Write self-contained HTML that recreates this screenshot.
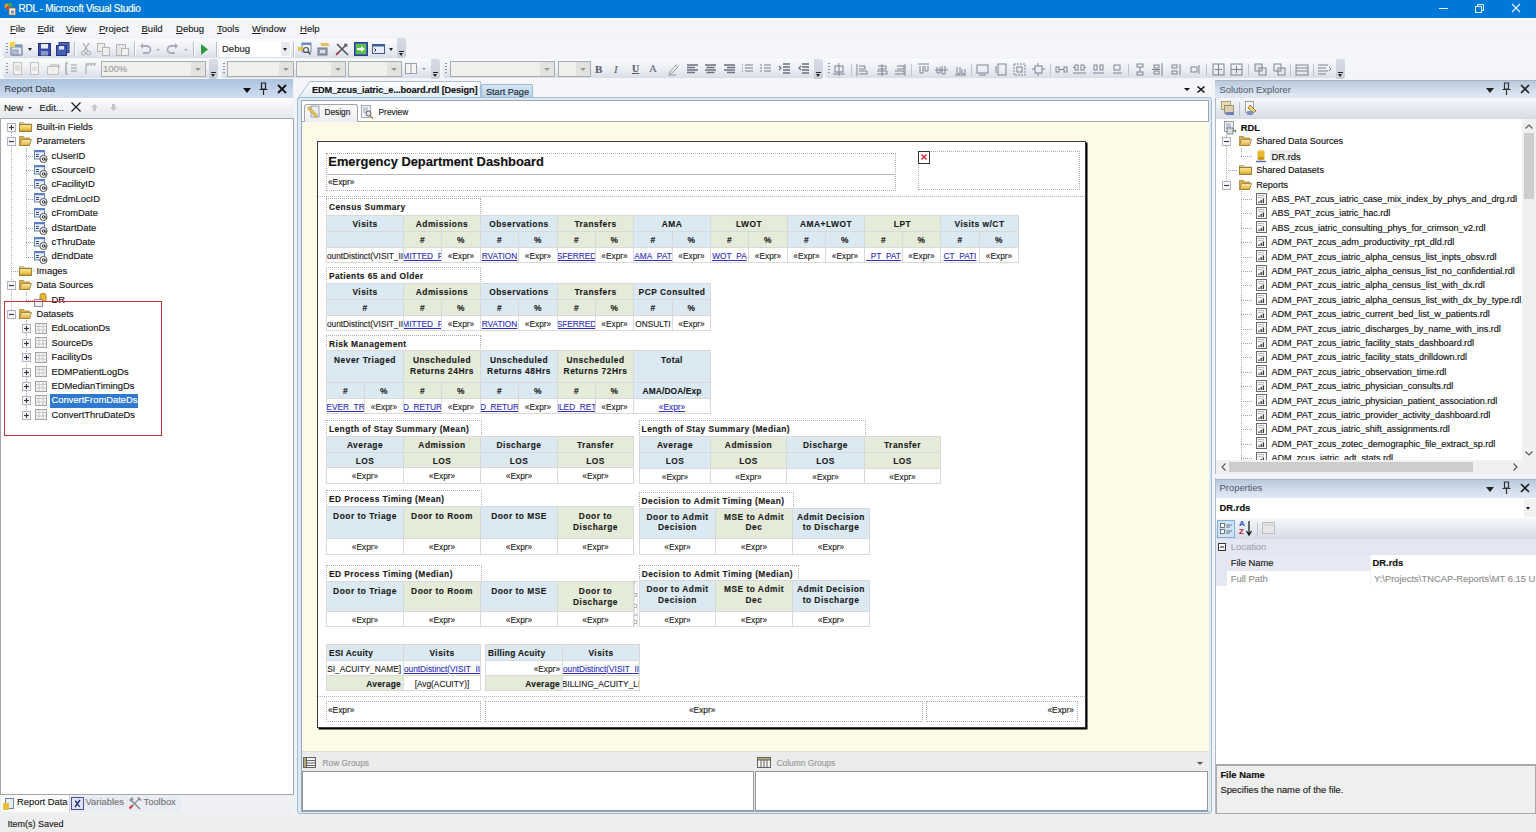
<!DOCTYPE html>
<html><head><meta charset="utf-8">
<style>
*{box-sizing:border-box;margin:0;padding:0}
html,body{width:1536px;height:832px;overflow:hidden;background:#eef0f6;font-family:"Liberation Sans",sans-serif;font-size:9.2px;color:#1e1e1e;position:relative}
.a{position:absolute}
.t{position:absolute;white-space:nowrap;line-height:1;-webkit-text-stroke:0.15px currentColor}
.a span{-webkit-text-stroke:0.12px currentColor}
svg{position:absolute;overflow:visible}
.strip{position:absolute;height:19px;border-radius:3px;background:linear-gradient(#fafbfd,#eceef4 55%,#d9dde8)}
.grip{position:absolute;width:2px;height:12px;background:repeating-linear-gradient(#8d93a3 0 1px,transparent 1px 3px)}
.sep{position:absolute;width:1px;height:15px;background:#b9bec9;box-shadow:1px 0 0 #fff}
.combo{position:absolute;height:16px;border:1px solid #a9adb4;background:#efefeb}
.combo .dd{position:absolute;right:0;top:0;width:14px;height:14px;background:#e2e2de}
.combo .dd:after{content:"";position:absolute;left:4px;top:6px;border:3px solid transparent;border-top:3px solid #999;border-bottom:0}
.ovf{position:absolute;width:9px;height:20px;background:linear-gradient(#d9dce6,#c9cdd9);border-radius:0 3px 3px 0}
.ovf:after{content:"";position:absolute;left:2px;top:13px;width:5px;height:1px;background:#222;box-shadow:0 0 0 0 #222}
.ovf:before{content:"";position:absolute;left:2px;top:15px;border:2.5px solid transparent;border-top:3px solid #222;border-bottom:0}
.ic{position:absolute;width:13px;height:13px}
.phdr{position:absolute;height:19px;background:linear-gradient(#abc2de,#c2d4ea 60%,#cddcef)}
.phdr2{position:absolute;height:19px;background:linear-gradient(#b9c8dc,#d3deec 55%,#e1e8f2);border-top:1px solid #a9b5c5}
.ptb{position:absolute;height:20px;background:linear-gradient(#fdfdfe,#f1f2f6 50%,#e6e9ef)}
.ptitle{position:absolute;top:4px;left:5px;font-size:9.4px;color:#2c3440;white-space:nowrap;line-height:1}
.tri{position:absolute;width:0;height:0;border:4.5px solid transparent;border-top:5px solid #111;border-bottom:0}
</style></head><body>

<!-- title bar -->
<div class="a" style="left:0;top:0;width:1536px;height:18px;background:#0078d7"></div>
<svg style="left:3px;top:2px" width="14" height="14" viewBox="0 0 14 14">
 <circle cx="4" cy="4" r="2.6" fill="#e0a030"/><circle cx="7" cy="3" r="2.2" fill="#4aa04a"/><circle cx="5" cy="6" r="2" fill="#d04040"/>
 <rect x="6" y="6" width="6.5" height="7" fill="#f4f0e0" stroke="#8a7a50" stroke-width=".8"/><rect x="8" y="8.5" width="3" height="3" fill="#7a8ab0"/>
</svg>
<div class="t" style="left:18.5px;top:3.6px;color:#fff;font-size:10px;letter-spacing:-0.28px">RDL - Microsoft Visual Studio</div>
<div class="a" style="left:1439px;top:8px;width:9px;height:1px;background:#e8f2ff"></div>
<svg style="left:1475px;top:4px" width="9" height="9" viewBox="0 0 9 9"><rect x="0.5" y="2.5" width="6" height="6" fill="none" stroke="#e8f2ff"/><path d="M2.5 2.5V0.5h6v6h-2" fill="none" stroke="#e8f2ff"/></svg>
<svg style="left:1512px;top:4px" width="8" height="8" viewBox="0 0 8 8"><path d="M0 0L8 8M8 0L0 8" stroke="#e8f2ff" stroke-width="1.1"/></svg>

<!-- menu -->
<div class="a" style="left:0;top:18px;width:1536px;height:21px;background:linear-gradient(#f6f8fb,#f2f4f9)"></div>
<div class="t" style="left:10px;top:24px;font-size:9.5px;color:#222"><u>F</u>ile</div>
<div class="t" style="left:37.5px;top:24px;font-size:9.5px;color:#222"><u>E</u>dit</div>
<div class="t" style="left:66px;top:24px;font-size:9.5px;color:#222"><u>V</u>iew</div>
<div class="t" style="left:99px;top:24px;font-size:9.5px;color:#222"><u>P</u>roject</div>
<div class="t" style="left:141.5px;top:24px;font-size:9.5px;color:#222"><u>B</u>uild</div>
<div class="t" style="left:176px;top:24px;font-size:9.5px;color:#222"><u>D</u>ebug</div>
<div class="t" style="left:217px;top:24px;font-size:9.5px;color:#222"><u>T</u>ools</div>
<div class="t" style="left:252px;top:24px;font-size:9.5px;color:#222"><u>W</u>indow</div>
<div class="t" style="left:300px;top:24px;font-size:9.5px;color:#222"><u>H</u>elp</div>

<!-- toolbar row 1 -->
<div class="a" style="left:0;top:39px;width:1536px;height:40px;background:#f3f5f9"></div>
<div class="strip" style="left:3px;top:39px;width:395px"></div>
<div class="ovf" style="left:397px;top:38px"></div>
<div class="grip" style="left:6px;top:43px"></div>
<!-- new project -->
<svg style="left:10px;top:42px" width="14" height="14" viewBox="0 0 14 14"><rect x="1" y="3" width="11" height="10" fill="#dfe7f2" stroke="#5b7396"/><rect x="1" y="3" width="11" height="2.5" fill="#7d97c0"/><rect x="0" y="0" width="5" height="5" fill="#f2d34a"/><rect x="3" y="8" width="5" height="5" fill="#b8c4d8" stroke="#6a7ea0" stroke-width=".7"/></svg>
<div class="tri" style="left:28px;top:48px;border-width:3px 2.5px 0;border-top-color:#222"></div>
<!-- save -->
<svg style="left:38px;top:43px" width="13" height="13" viewBox="0 0 13 13"><rect x="0.5" y="0.5" width="12" height="12" fill="#3a50a8" stroke="#24307a"/><rect x="3" y="1" width="7" height="4.5" fill="#e8ecf6"/><rect x="3" y="8" width="7" height="4.5" fill="#8898c8"/></svg>
<svg style="left:56px;top:42px" width="14" height="14" viewBox="0 0 14 14"><rect x="3" y="0.5" width="10" height="10" fill="#4f68b8" stroke="#2a3a86"/><rect x="0.5" y="3.5" width="10" height="10" fill="#4560b2" stroke="#263680"/><rect x="3" y="4" width="5" height="3.5" fill="#dfe5f4"/></svg>
<div class="sep" style="left:74px;top:42px"></div>
<svg style="left:81px;top:43px" width="10" height="13" viewBox="0 0 10 13"><path d="M2 0L7 8M8 0L3 8" stroke="#aaa" stroke-width="1.2"/><circle cx="2.5" cy="10" r="2" fill="none" stroke="#aaa"/><circle cx="7.5" cy="10" r="2" fill="none" stroke="#aaa"/></svg>
<svg style="left:97px;top:43px" width="13" height="13" viewBox="0 0 13 13"><rect x="0.5" y="0.5" width="7" height="8" fill="#eee" stroke="#b5b5b5"/><rect x="5.5" y="4.5" width="7" height="8" fill="#eee" stroke="#b5b5b5"/></svg>
<svg style="left:116px;top:43px" width="13" height="13" viewBox="0 0 13 13"><rect x="0.5" y="1.5" width="9" height="11" fill="#e5e5e5" stroke="#b5b5b5"/><rect x="5.5" y="5.5" width="7" height="7" fill="#f2f2f2" stroke="#b5b5b5"/></svg>
<div class="sep" style="left:134px;top:42px"></div>
<svg style="left:140px;top:43px" width="11" height="12" viewBox="0 0 11 12"><path d="M2 3h5a3 3 0 0 1 0 7H3" fill="none" stroke="#aab" stroke-width="1.8"/><path d="M0 3l3-3v6z" fill="#aab"/></svg>
<div class="tri" style="left:156px;top:49px;border-width:2.5px 2px 0;border-top-color:#aaa"></div>
<svg style="left:167px;top:43px" width="11" height="12" viewBox="0 0 11 12"><path d="M9 3H4a3 3 0 0 0 0 7h4" fill="none" stroke="#aab" stroke-width="1.8"/><path d="M11 3L8 0v6z" fill="#aab"/></svg>
<div class="tri" style="left:184px;top:49px;border-width:2.5px 2px 0;border-top-color:#aaa"></div>
<div class="sep" style="left:193px;top:42px"></div>
<svg style="left:201px;top:44px" width="8" height="11" viewBox="0 0 8 11"><path d="M0 0L7 5.5L0 11z" fill="#2f9a3a"/></svg>
<div class="sep" style="left:216px;top:42px"></div>
<div class="a" style="left:219px;top:41px;width:72px;height:16px;background:#fff"></div>
<div class="t" style="left:222px;top:44px;font-size:9.5px;color:#222">Debug</div>
<div class="a" style="left:281px;top:42px;width:9px;height:14px;background:#e9eaee"></div>
<div class="tri" style="left:283px;top:48px;border-width:3px 2.5px 0;border-top-color:#222"></div>
<div class="sep" style="left:293px;top:42px"></div>
<svg style="left:298px;top:42px" width="14" height="14" viewBox="0 0 14 14"><rect x="4" y="1" width="9" height="9" fill="#eef2f8" stroke="#6d8ab8"/><rect x="4" y="1" width="9" height="2" fill="#6d8ab8"/><path d="M0 5h5v4H0z" fill="#e5c45a"/><circle cx="8" cy="8" r="2.5" fill="none" stroke="#555" stroke-width="1.2"/><path d="M9.8 9.8L12.5 12.5" stroke="#555" stroke-width="1.5"/></svg>
<svg style="left:317px;top:42px" width="14" height="14" viewBox="0 0 14 14"><path d="M3 1h8l2 3H5z" fill="#e6c25a"/><rect x="1" y="6" width="9" height="7" fill="#9aa3b4" stroke="#6c7484"/><rect x="3" y="8" width="5" height="3" fill="#dde"/></svg>
<svg style="left:335px;top:42px" width="14" height="14" viewBox="0 0 14 14"><path d="M1 13L12 2M2 2l11 11" stroke="#555" stroke-width="1.6"/><path d="M1 13l3-1-2-2z" fill="#d03030"/><path d="M10 1l3 3-2 1-2-2z" fill="#666"/></svg>
<svg style="left:354px;top:42px" width="14" height="14" viewBox="0 0 14 14"><rect x="0.5" y="0.5" width="13" height="13" fill="#3f63b0" stroke="#2a4080"/><rect x="2" y="2" width="10" height="10" fill="#5cc24a"/><path d="M3 6h4V4l4 3-4 3V8H3z" fill="#fff"/></svg>
<svg style="left:372px;top:43px" width="13" height="12" viewBox="0 0 13 12"><rect x="0.5" y="1.5" width="12" height="9" fill="#e9eef6" stroke="#3f5f98"/><rect x="0.5" y="1.5" width="12" height="2" fill="#3f5f98"/><path d="M2.5 5.5l1.5 1.5-1.5 1.5" stroke="#222" fill="none"/></svg>
<div class="tri" style="left:389px;top:48px;border-width:3px 2.5px 0;border-top-color:#222"></div>

<!-- toolbar row 2 -->
<div class="strip" style="left:3px;top:59px;width:207px"></div>
<div class="ovf" style="left:209px;top:59px"></div>
<div class="grip" style="left:6px;top:63px"></div>
<svg style="left:13px;top:62px" width="9" height="13" viewBox="0 0 9 13"><rect x="0.5" y="0.5" width="8" height="12" fill="#f2f2f2" stroke="#c2c2c2"/><path d="M2 4h5M2 6h5M2 8h5" stroke="#ccc"/></svg>
<svg style="left:30px;top:62px" width="9" height="13" viewBox="0 0 9 13"><rect x="0.5" y="0.5" width="8" height="12" fill="#f2f2f2" stroke="#c2c2c2"/><path d="M2 6h5M2 8h5" stroke="#ccc"/></svg>
<svg style="left:47px;top:62px" width="13" height="13" viewBox="0 0 13 13"><rect x="0.5" y="4.5" width="11" height="8" fill="#f0f0f0" stroke="#c2c2c2"/><path d="M3 3h9v3" fill="none" stroke="#b0b0b0"/></svg>
<svg style="left:65px;top:62px" width="13" height="13" viewBox="0 0 13 13"><path d="M3 1H1v11h2M6 3h6M6 6h6M6 9h6" fill="none" stroke="#999" stroke-width="1.2"/></svg>
<svg style="left:85px;top:62px" width="12" height="13" viewBox="0 0 12 13"><path d="M1 12V2h10M3 1v3M6 1v3M9 1v3" fill="none" stroke="#aaa" stroke-width="1.1"/></svg>
<div class="combo" style="left:101px;top:61px;width:105px"><div class="dd"></div></div>
<div class="t" style="left:103px;top:64px;font-size:9.5px;color:#a0a0a0">100%</div>

<div class="strip" style="left:221px;top:59px;width:211px"></div>
<div class="ovf" style="left:431px;top:59px"></div>
<div class="grip" style="left:223px;top:63px"></div>
<div class="combo" style="left:226.5px;top:61px;width:67px"><div class="dd"></div></div>
<div class="combo" style="left:295.5px;top:61px;width:50px"><div class="dd"></div></div>
<div class="combo" style="left:347.5px;top:61px;width:54px"><div class="dd"></div></div>
<svg style="left:405px;top:63px" width="12" height="11" viewBox="0 0 12 11"><rect x="0.5" y="0.5" width="11" height="10" fill="#f5f5f5" stroke="#9aa0ac"/><path d="M6 0.5v10" stroke="#9aa0ac"/></svg>
<div class="tri" style="left:422px;top:68px;border-width:2.5px 2px 0;border-top-color:#999"></div>

<div class="strip" style="left:443px;top:59px;width:373px"></div>
<div class="ovf" style="left:814px;top:59px"></div>
<div class="grip" style="left:445px;top:63px"></div>
<div class="combo" style="left:449.5px;top:61px;width:105px"><div class="dd"></div></div>
<div class="combo" style="left:557.5px;top:61px;width:33px"><div class="dd"></div></div>
<div class="t" style="left:595px;top:64px;font-size:11px;font-weight:bold;font-family:'Liberation Serif',serif;color:#5a5f6c">B</div>
<div class="t" style="left:614px;top:64px;font-size:11px;font-style:italic;font-family:'Liberation Serif',serif;color:#5a5f6c">I</div>
<div class="t" style="left:632px;top:64px;font-size:10px;font-weight:bold;text-decoration:underline;font-family:'Liberation Serif',serif;color:#5a5f6c">U</div>
<div class="t" style="left:649px;top:63px;font-size:11px;font-family:'Liberation Serif',serif;color:#6a6f7c">A</div>
<svg style="left:667px;top:63px" width="13" height="13" viewBox="0 0 13 13"><path d="M2 10L9 2l2 2-7 7z" fill="none" stroke="#999"/><rect x="1" y="11" width="8" height="2" fill="#bbb"/></svg>
<svg style="left:687px;top:64px" width="11" height="10" viewBox="0 0 11 10"><path d="M0 1h11M0 3.5h8M0 6h11M0 8.5h8" stroke="#6a6f7c" stroke-width="1.3"/></svg>
<svg style="left:705px;top:64px" width="11" height="10" viewBox="0 0 11 10"><path d="M0 1h11M1.5 3.5h8M0 6h11M1.5 8.5h8" stroke="#6a6f7c" stroke-width="1.3"/></svg>
<svg style="left:724px;top:64px" width="11" height="10" viewBox="0 0 11 10"><path d="M0 1h11M3 3.5h8M0 6h11M3 8.5h8" stroke="#6a6f7c" stroke-width="1.3"/></svg>
<svg style="left:742px;top:64px" width="11" height="10" viewBox="0 0 11 10"><path d="M0 1h1M3 1h8M0 4h1M3 4h8M0 7h1M3 7h8" stroke="#7a7f8c" stroke-width="1.2"/></svg>
<svg style="left:760px;top:64px" width="11" height="10" viewBox="0 0 11 10"><path d="M0 1h2M4 1h7M0 4h2M4 4h7M0 7h2M4 7h7" stroke="#7a7f8c" stroke-width="1.2"/></svg>
<svg style="left:779px;top:63px" width="11" height="12" viewBox="0 0 11 12"><path d="M4 1h7M4 4h7M4 7h7M4 10h7M0 3l2 2-2 2" fill="none" stroke="#6a6f7c" stroke-width="1.3"/></svg>
<svg style="left:798px;top:63px" width="11" height="12" viewBox="0 0 11 12"><path d="M4 1h7M4 4h7M4 7h7M4 10h7M3 3L1 5l2 2" fill="none" stroke="#6a6f7c" stroke-width="1.3"/></svg>

<div class="strip" style="left:825px;top:59px;width:513px"></div>
<div class="ovf" style="left:1336px;top:59px"></div>
<div class="grip" style="left:828px;top:63px"></div>
<svg style="left:0;top:63px" width="1536" height="14" viewBox="0 0 1536 14" fill="none" stroke="#7f8491" stroke-width="1">
 <g transform="translate(833,0)"><rect x="2" y="3" width="8" height="6"/><path d="M6 0v13M0 11h12"/></g>
 <path d="M851.5 1v12" stroke="#c0c4cc"/>
 <g transform="translate(856,0)"><path d="M1 1v12M3 3h6v3H3M3 8h8v3H3"/></g>
 <g transform="translate(876,0)"><path d="M6 1v12M2 3h8v3H2M1 8h10v3H1"/></g>
 <g transform="translate(894,0)"><path d="M11 1v12M3 3h7v3H3M1 8h9v3H1"/></g>
 <path d="M911.5 1v12" stroke="#c0c4cc"/>
 <g transform="translate(917,0)"><path d="M1 1h11M3 3v7h3V3M8 3v5h3V3"/></g>
 <g transform="translate(935,0)"><path d="M0 7h13M2 4v6h3V4M7 3v8h3V3"/></g>
 <g transform="translate(954,0)"><path d="M1 12h11M3 4v7h3V4M8 6v5h3V6"/></g>
 <path d="M971.5 1v12" stroke="#c0c4cc"/>
 <g transform="translate(976,0)"><rect x="1" y="2" width="11" height="8"/><path d="M3 12h7"/></g>
 <g transform="translate(995,0)"><rect x="3" y="1" width="8" height="11"/><path d="M1 3v7"/></g>
 <g transform="translate(1013,0)"><rect x="1" y="1" width="11" height="11" stroke-dasharray="2 1"/><rect x="4" y="4" width="5" height="5"/></g>
 <g transform="translate(1032,0)"><rect x="3" y="3" width="7" height="7"/><path d="M6 0v3M6 10v3M0 6h3M10 6h3"/></g>
 <path d="M1050.5 1v12" stroke="#c0c4cc"/>
 <g transform="translate(1055,0)"><rect x="1" y="4" width="3" height="5"/><rect x="9" y="4" width="3" height="5"/><path d="M4 6.5h5"/></g>
 <g transform="translate(1073,0)"><rect x="2" y="2" width="3" height="5"/><rect x="8" y="2" width="3" height="5"/><path d="M0 10h13M0 4.5h2M11 4.5h2"/></g>
 <g transform="translate(1092,0)"><rect x="2" y="2" width="3" height="5"/><rect x="8" y="2" width="3" height="5"/><path d="M1 10h11"/></g>
 <g transform="translate(1111,0)"><rect x="3" y="2" width="6" height="5"/><path d="M2 10h9"/></g>
 <path d="M1128.5 1v12" stroke="#c0c4cc"/>
 <g transform="translate(1134,0)"><rect x="3" y="1" width="6" height="3"/><rect x="3" y="9" width="6" height="3"/><path d="M6 4v5"/></g>
 <g transform="translate(1152,0)"><rect x="2" y="2" width="5" height="3"/><rect x="2" y="8" width="5" height="3"/><path d="M10 0v13M0 6.5h8"/></g>
 <g transform="translate(1170,0)"><rect x="2" y="2" width="5" height="3"/><rect x="2" y="8" width="5" height="3"/><path d="M10 1v11"/></g>
 <g transform="translate(1189,0)"><rect x="2" y="4" width="6" height="5"/><path d="M10 2v9"/></g>
 <path d="M1206.5 1v12" stroke="#c0c4cc"/>
 <g transform="translate(1212,0)"><rect x="1" y="1" width="11" height="11"/><path d="M6.5 1v11M3 6.5h7"/></g>
 <g transform="translate(1230,0)"><rect x="1" y="1" width="11" height="11"/><path d="M1 6.5h11M6.5 3v7"/></g>
 <path d="M1248.5 1v12" stroke="#c0c4cc"/>
 <g transform="translate(1254,0)"><rect x="1" y="1" width="7" height="7" fill="#e4e6ea"/><rect x="5" y="5" width="7" height="7"/></g>
 <g transform="translate(1273,0)"><rect x="5" y="5" width="7" height="7" fill="#e4e6ea"/><rect x="1" y="1" width="7" height="7"/></g>
 <path d="M1290.5 1v12" stroke="#c0c4cc"/>
 <g transform="translate(1295,0)"><rect x="1" y="2" width="12" height="10"/><path d="M1 5h12M1 8h12"/></g>
 <path d="M1313.5 1v12" stroke="#c0c4cc"/>
 <g transform="translate(1318,0)"><path d="M0 2h10M0 5h8M0 8h10M0 11h8M11 4l2 2-2 2"/></g>
</svg>

<div class="a" style="left:0;top:79px;width:294px;height:736px;background:#eef0f6"></div>
<div class="phdr" style="left:0;top:79px;width:293px"></div>
<div class="ptitle" style="left:4.5px;top:84px;font-size:9.4px">Report Data</div>
<div class="tri" style="left:243px;top:88px;border-width:5px 4.5px 0"></div>
<svg style="left:259px;top:82px" width="9" height="13" viewBox="0 0 9 13"><path d="M2.5 1h4v6h-4z" fill="none" stroke="#222" stroke-width="1.2"/><path d="M0.5 7.5h8M4.5 8v5" stroke="#222" stroke-width="1.2"/></svg>
<svg style="left:277px;top:83.5px" width="10" height="10" viewBox="0 0 10 10"><path d="M1 1L9 9M9 1L1 9" stroke="#111" stroke-width="1.8"/></svg>
<div class="ptb" style="left:0;top:98px;width:293px"></div>
<div class="t" style="left:4px;top:103px;font-size:9.5px;color:#222">New</div>
<div class="tri" style="left:28px;top:107px;border-width:2.5px 2px 0;border-top-color:#333"></div>
<div class="t" style="left:39.5px;top:103px;font-size:9.5px;color:#222">Edit...</div>
<svg style="left:71px;top:102px" width="10" height="10" viewBox="0 0 10 10"><path d="M0.5 0.5L9.5 9.5M9.5 0.5L0.5 9.5" stroke="#222" stroke-width="1.3"/></svg>
<svg style="left:91px;top:104px" width="7" height="7" viewBox="0 0 7 7"><path d="M3.5 0L7 3.5H5V7H2V3.5H0z" fill="#c4c4c4"/></svg>
<svg style="left:110px;top:104px" width="7" height="7" viewBox="0 0 7 7"><path d="M3.5 7L7 3.5H5V0H2V3.5H0z" fill="#c4c4c4"/></svg>
<div class="a" style="left:0;top:118px;width:294px;height:677px;background:#fff;border:1px solid #a3a6ad"></div>
<div class="a" style="left:0;top:795px;width:294px;height:19px;background:#eef0f6"></div>
<div class="a" style="left:1px;top:795px;width:69px;height:17px;background:#fcfcfd;border-right:1px solid #d0d3da"></div>
<div class="a" style="left:71px;top:796px;width:110px;height:16px;background:#e9ecf3"></div>
<svg style="left:3px;top:798px" width="11" height="12" viewBox="0 0 11 12"><rect x="2.5" y="0.5" width="8" height="10" fill="#e8eef8" stroke="#6a84b0"/><rect x="0" y="5" width="6" height="7" fill="#e8c040"/></svg>
<div class="t" style="left:17px;top:797px;font-size:9.4px;color:#222">Report Data</div>
<svg style="left:71px;top:797px" width="13" height="13" viewBox="0 0 13 13"><rect x="0.5" y="0.5" width="12" height="12" fill="#dfe3f0" stroke="#4a4f9a"/><path d="M4 10L9 3M4 4c2 0 2.5 5.5 5 5.5" stroke="#1f2a80" stroke-width="1.4" fill="none"/></svg>
<div class="t" style="left:85.5px;top:797px;font-size:9.4px;color:#777">Variables</div>
<svg style="left:128px;top:797px" width="14" height="13" viewBox="0 0 14 13"><path d="M2 2l10 10" stroke="#8a8a8a" stroke-width="1.6"/><path d="M1 3l3-3 2 2-3 3z" fill="#9a9a9a"/><path d="M12 1L4 9" stroke="#9a9a9a" stroke-width="1.4"/><path d="M4.5 8.5L1.5 11.5" stroke="#d03a3a" stroke-width="2.2"/><path d="M10 0.5l3 3" stroke="#888" stroke-width="1.5"/></svg>
<div class="t" style="left:143.5px;top:797px;font-size:9.4px;color:#777">Toolbox</div>
<div class="a" style="left:10.5px;top:132px;width:1px;height:182px;border-left:1px dotted #b0b0b0"></div>
<div class="a" style="left:25.5px;top:148px;width:1px;height:108px;border-left:1px dotted #b0b0b0"></div>
<div class="a" style="left:25.5px;top:292px;width:1px;height:8px;border-left:1px dotted #b0b0b0"></div>
<div class="a" style="left:25.5px;top:320px;width:1px;height:92px;border-left:1px dotted #b0b0b0"></div>
<svg style="left:7px;top:123px" width="9" height="9" viewBox="0 0 9 9"><rect x="0.5" y="0.5" width="8" height="8" fill="#f6f6f8" stroke="#b0b4c0"/><path d="M2 4.5h5" stroke="#3a3a3a" stroke-width="1.1"/><path d="M4.5 2v5" stroke="#3a3a3a" stroke-width="1.1"/></svg>
<svg style="left:19px;top:121.9px" width="13" height="10" viewBox="0 0 13 10"><defs><linearGradient id="fc" x1="0" y1="0" x2="0" y2="1"><stop offset="0" stop-color="#f8e7a0"/><stop offset=".6" stop-color="#efc850"/><stop offset="1" stop-color="#c89830"/></linearGradient></defs><path d="M0.5 0.5h4l1 1.5h7v2H0.5z" fill="#e0cfa0" stroke="#b0a070" stroke-width=".8"/><rect x="0.5" y="2.5" width="12" height="7" fill="url(#fc)" stroke="#8a6a20" stroke-width=".8"/></svg>
<div class="t" style="left:36.5px;top:121.7px;font-size:9.4px;color:#141414">Built-in Fields</div>
<svg style="left:7px;top:137px" width="9" height="9" viewBox="0 0 9 9"><rect x="0.5" y="0.5" width="8" height="8" fill="#f6f6f8" stroke="#b0b4c0"/><path d="M2 4.5h5" stroke="#3a3a3a" stroke-width="1.1"/></svg>
<svg style="left:19px;top:136.3px" width="13" height="10" viewBox="0 0 13 10"><defs><linearGradient id="fo" x1="0" y1="0" x2="0" y2="1"><stop offset="0" stop-color="#fbeaa8"/><stop offset="1" stop-color="#dcae40"/></linearGradient></defs><path d="M0.5 0.5h4l1 1.5h5v7.5H0.5z" fill="#d8b050" stroke="#a88a40" stroke-width=".8"/><path d="M2.5 3.5h10l-2 6H0.5z" fill="url(#fo)" stroke="#9a7a30" stroke-width=".8"/></svg>
<div class="t" style="left:36.5px;top:136.1px;font-size:9.4px;color:#141414">Parameters</div>
<div class="a" style="left:26px;top:155.7px;width:7px;height:1px;border-top:1px dotted #a0a0a0"></div>
<svg style="left:34px;top:149.2px" width="14" height="14" viewBox="0 0 14 14"><rect x="0.5" y="1.5" width="10" height="8.5" fill="#e8eef8" stroke="#5a78b0" stroke-width=".9"/><rect x="0.5" y="1" width="10" height="2.2" fill="#5b80c8"/><path d="M2 5.5h3M2 7.5h3" stroke="#3a4a70"/><circle cx="9.5" cy="10" r="3.6" fill="#f4f4f4" stroke="#444" stroke-width=".9"/><circle cx="9.6" cy="10" r="1.3" fill="none" stroke="#222" stroke-width=".9"/><path d="M10.9 9v1.6c0 .8 1.3.8 1.3-.3" fill="none" stroke="#222" stroke-width=".8"/></svg>
<div class="t" style="left:51.5px;top:150.5px;font-size:9.4px;color:#141414">cUserID</div>
<div class="a" style="left:26px;top:170.1px;width:7px;height:1px;border-top:1px dotted #a0a0a0"></div>
<svg style="left:34px;top:163.6px" width="14" height="14" viewBox="0 0 14 14"><rect x="0.5" y="1.5" width="10" height="8.5" fill="#e8eef8" stroke="#5a78b0" stroke-width=".9"/><rect x="0.5" y="1" width="10" height="2.2" fill="#5b80c8"/><path d="M2 5.5h3M2 7.5h3" stroke="#3a4a70"/><circle cx="9.5" cy="10" r="3.6" fill="#f4f4f4" stroke="#444" stroke-width=".9"/><circle cx="9.6" cy="10" r="1.3" fill="none" stroke="#222" stroke-width=".9"/><path d="M10.9 9v1.6c0 .8 1.3.8 1.3-.3" fill="none" stroke="#222" stroke-width=".8"/></svg>
<div class="t" style="left:51.5px;top:164.9px;font-size:9.4px;color:#141414">cSourceID</div>
<div class="a" style="left:26px;top:184.5px;width:7px;height:1px;border-top:1px dotted #a0a0a0"></div>
<svg style="left:34px;top:178.0px" width="14" height="14" viewBox="0 0 14 14"><rect x="0.5" y="1.5" width="10" height="8.5" fill="#e8eef8" stroke="#5a78b0" stroke-width=".9"/><rect x="0.5" y="1" width="10" height="2.2" fill="#5b80c8"/><path d="M2 5.5h3M2 7.5h3" stroke="#3a4a70"/><circle cx="9.5" cy="10" r="3.6" fill="#f4f4f4" stroke="#444" stroke-width=".9"/><circle cx="9.6" cy="10" r="1.3" fill="none" stroke="#222" stroke-width=".9"/><path d="M10.9 9v1.6c0 .8 1.3.8 1.3-.3" fill="none" stroke="#222" stroke-width=".8"/></svg>
<div class="t" style="left:51.5px;top:179.3px;font-size:9.4px;color:#141414">cFacilityID</div>
<div class="a" style="left:26px;top:198.9px;width:7px;height:1px;border-top:1px dotted #a0a0a0"></div>
<svg style="left:34px;top:192.4px" width="14" height="14" viewBox="0 0 14 14"><rect x="0.5" y="1.5" width="10" height="8.5" fill="#e8eef8" stroke="#5a78b0" stroke-width=".9"/><rect x="0.5" y="1" width="10" height="2.2" fill="#5b80c8"/><path d="M2 5.5h3M2 7.5h3" stroke="#3a4a70"/><circle cx="9.5" cy="10" r="3.6" fill="#f4f4f4" stroke="#444" stroke-width=".9"/><circle cx="9.6" cy="10" r="1.3" fill="none" stroke="#222" stroke-width=".9"/><path d="M10.9 9v1.6c0 .8 1.3.8 1.3-.3" fill="none" stroke="#222" stroke-width=".8"/></svg>
<div class="t" style="left:51.5px;top:193.7px;font-size:9.4px;color:#141414">cEdmLocID</div>
<div class="a" style="left:26px;top:213.3px;width:7px;height:1px;border-top:1px dotted #a0a0a0"></div>
<svg style="left:34px;top:206.8px" width="14" height="14" viewBox="0 0 14 14"><rect x="0.5" y="1.5" width="10" height="8.5" fill="#e8eef8" stroke="#5a78b0" stroke-width=".9"/><rect x="0.5" y="1" width="10" height="2.2" fill="#5b80c8"/><path d="M2 5.5h3M2 7.5h3" stroke="#3a4a70"/><circle cx="9.5" cy="10" r="3.6" fill="#f4f4f4" stroke="#444" stroke-width=".9"/><circle cx="9.6" cy="10" r="1.3" fill="none" stroke="#222" stroke-width=".9"/><path d="M10.9 9v1.6c0 .8 1.3.8 1.3-.3" fill="none" stroke="#222" stroke-width=".8"/></svg>
<div class="t" style="left:51.5px;top:208.1px;font-size:9.4px;color:#141414">cFromDate</div>
<div class="a" style="left:26px;top:227.7px;width:7px;height:1px;border-top:1px dotted #a0a0a0"></div>
<svg style="left:34px;top:221.2px" width="14" height="14" viewBox="0 0 14 14"><rect x="0.5" y="1.5" width="10" height="8.5" fill="#e8eef8" stroke="#5a78b0" stroke-width=".9"/><rect x="0.5" y="1" width="10" height="2.2" fill="#5b80c8"/><path d="M2 5.5h3M2 7.5h3" stroke="#3a4a70"/><circle cx="9.5" cy="10" r="3.6" fill="#f4f4f4" stroke="#444" stroke-width=".9"/><circle cx="9.6" cy="10" r="1.3" fill="none" stroke="#222" stroke-width=".9"/><path d="M10.9 9v1.6c0 .8 1.3.8 1.3-.3" fill="none" stroke="#222" stroke-width=".8"/></svg>
<div class="t" style="left:51.5px;top:222.5px;font-size:9.4px;color:#141414">dStartDate</div>
<div class="a" style="left:26px;top:242.1px;width:7px;height:1px;border-top:1px dotted #a0a0a0"></div>
<svg style="left:34px;top:235.6px" width="14" height="14" viewBox="0 0 14 14"><rect x="0.5" y="1.5" width="10" height="8.5" fill="#e8eef8" stroke="#5a78b0" stroke-width=".9"/><rect x="0.5" y="1" width="10" height="2.2" fill="#5b80c8"/><path d="M2 5.5h3M2 7.5h3" stroke="#3a4a70"/><circle cx="9.5" cy="10" r="3.6" fill="#f4f4f4" stroke="#444" stroke-width=".9"/><circle cx="9.6" cy="10" r="1.3" fill="none" stroke="#222" stroke-width=".9"/><path d="M10.9 9v1.6c0 .8 1.3.8 1.3-.3" fill="none" stroke="#222" stroke-width=".8"/></svg>
<div class="t" style="left:51.5px;top:236.9px;font-size:9.4px;color:#141414">cThruDate</div>
<div class="a" style="left:26px;top:256.5px;width:7px;height:1px;border-top:1px dotted #a0a0a0"></div>
<svg style="left:34px;top:250.0px" width="14" height="14" viewBox="0 0 14 14"><rect x="0.5" y="1.5" width="10" height="8.5" fill="#e8eef8" stroke="#5a78b0" stroke-width=".9"/><rect x="0.5" y="1" width="10" height="2.2" fill="#5b80c8"/><path d="M2 5.5h3M2 7.5h3" stroke="#3a4a70"/><circle cx="9.5" cy="10" r="3.6" fill="#f4f4f4" stroke="#444" stroke-width=".9"/><circle cx="9.6" cy="10" r="1.3" fill="none" stroke="#222" stroke-width=".9"/><path d="M10.9 9v1.6c0 .8 1.3.8 1.3-.3" fill="none" stroke="#222" stroke-width=".8"/></svg>
<div class="t" style="left:51.5px;top:251.3px;font-size:9.4px;color:#141414">dEndDate</div>
<div class="a" style="left:11px;top:270.9px;width:7px;height:1px;border-top:1px dotted #a0a0a0"></div>
<svg style="left:19px;top:265.9px" width="13" height="10" viewBox="0 0 13 10"><defs><linearGradient id="fc" x1="0" y1="0" x2="0" y2="1"><stop offset="0" stop-color="#f8e7a0"/><stop offset=".6" stop-color="#efc850"/><stop offset="1" stop-color="#c89830"/></linearGradient></defs><path d="M0.5 0.5h4l1 1.5h7v2H0.5z" fill="#e0cfa0" stroke="#b0a070" stroke-width=".8"/><rect x="0.5" y="2.5" width="12" height="7" fill="url(#fc)" stroke="#8a6a20" stroke-width=".8"/></svg>
<div class="t" style="left:36.5px;top:265.7px;font-size:9.4px;color:#141414">Images</div>
<svg style="left:7px;top:281px" width="9" height="9" viewBox="0 0 9 9"><rect x="0.5" y="0.5" width="8" height="8" fill="#f6f6f8" stroke="#b0b4c0"/><path d="M2 4.5h5" stroke="#3a3a3a" stroke-width="1.1"/></svg>
<svg style="left:19px;top:280.3px" width="13" height="10" viewBox="0 0 13 10"><defs><linearGradient id="fo" x1="0" y1="0" x2="0" y2="1"><stop offset="0" stop-color="#fbeaa8"/><stop offset="1" stop-color="#dcae40"/></linearGradient></defs><path d="M0.5 0.5h4l1 1.5h5v7.5H0.5z" fill="#d8b050" stroke="#a88a40" stroke-width=".8"/><path d="M2.5 3.5h10l-2 6H0.5z" fill="url(#fo)" stroke="#9a7a30" stroke-width=".8"/></svg>
<div class="t" style="left:36.5px;top:280.1px;font-size:9.4px;color:#141414">Data Sources</div>
<div class="a" style="left:26px;top:299.7px;width:7px;height:1px;border-top:1px dotted #a0a0a0"></div>
<svg style="left:34px;top:293.2px" width="14" height="14" viewBox="0 0 14 14"><rect x="6" y="0.5" width="6" height="8" rx="2" fill="#e8b830" stroke="#a07a10" stroke-width=".8"/><rect x="0.5" y="6.5" width="8" height="7" fill="#eef" stroke="#777" stroke-width=".8"/></svg>
<div class="t" style="left:51.5px;top:294.5px;font-size:9.4px;color:#141414">DR</div>
<svg style="left:7px;top:310px" width="9" height="9" viewBox="0 0 9 9"><rect x="0.5" y="0.5" width="8" height="8" fill="#f6f6f8" stroke="#b0b4c0"/><path d="M2 4.5h5" stroke="#3a3a3a" stroke-width="1.1"/></svg>
<svg style="left:19px;top:309.1px" width="13" height="10" viewBox="0 0 13 10"><defs><linearGradient id="fo" x1="0" y1="0" x2="0" y2="1"><stop offset="0" stop-color="#fbeaa8"/><stop offset="1" stop-color="#dcae40"/></linearGradient></defs><path d="M0.5 0.5h4l1 1.5h5v7.5H0.5z" fill="#d8b050" stroke="#a88a40" stroke-width=".8"/><path d="M2.5 3.5h10l-2 6H0.5z" fill="url(#fo)" stroke="#9a7a30" stroke-width=".8"/></svg>
<div class="t" style="left:36.5px;top:308.9px;font-size:9.4px;color:#141414">Datasets</div>
<svg style="left:22px;top:324px" width="9" height="9" viewBox="0 0 9 9"><rect x="0.5" y="0.5" width="8" height="8" fill="#f6f6f8" stroke="#b0b4c0"/><path d="M2 4.5h5" stroke="#3a3a3a" stroke-width="1.1"/><path d="M4.5 2v5" stroke="#3a3a3a" stroke-width="1.1"/></svg>
<svg style="left:35px;top:323.0px" width="12" height="11" viewBox="0 0 12 11"><rect x="0.5" y="0.5" width="11" height="10" fill="#f4f4f4" stroke="#a0a0a0"/><path d="M0.5 3.5h11M0.5 7h11M4 0.5v10M8 0.5v10" stroke="#c8c8c8"/></svg>
<div class="t" style="left:51.5px;top:323.3px;font-size:9.4px;color:#141414">EdLocationDs</div>
<svg style="left:22px;top:339px" width="9" height="9" viewBox="0 0 9 9"><rect x="0.5" y="0.5" width="8" height="8" fill="#f6f6f8" stroke="#b0b4c0"/><path d="M2 4.5h5" stroke="#3a3a3a" stroke-width="1.1"/><path d="M4.5 2v5" stroke="#3a3a3a" stroke-width="1.1"/></svg>
<svg style="left:35px;top:337.4px" width="12" height="11" viewBox="0 0 12 11"><rect x="0.5" y="0.5" width="11" height="10" fill="#f4f4f4" stroke="#a0a0a0"/><path d="M0.5 3.5h11M0.5 7h11M4 0.5v10M8 0.5v10" stroke="#c8c8c8"/></svg>
<div class="t" style="left:51.5px;top:337.7px;font-size:9.4px;color:#141414">SourceDs</div>
<svg style="left:22px;top:353px" width="9" height="9" viewBox="0 0 9 9"><rect x="0.5" y="0.5" width="8" height="8" fill="#f6f6f8" stroke="#b0b4c0"/><path d="M2 4.5h5" stroke="#3a3a3a" stroke-width="1.1"/><path d="M4.5 2v5" stroke="#3a3a3a" stroke-width="1.1"/></svg>
<svg style="left:35px;top:351.8px" width="12" height="11" viewBox="0 0 12 11"><rect x="0.5" y="0.5" width="11" height="10" fill="#f4f4f4" stroke="#a0a0a0"/><path d="M0.5 3.5h11M0.5 7h11M4 0.5v10M8 0.5v10" stroke="#c8c8c8"/></svg>
<div class="t" style="left:51.5px;top:352.1px;font-size:9.4px;color:#141414">FacilityDs</div>
<svg style="left:22px;top:368px" width="9" height="9" viewBox="0 0 9 9"><rect x="0.5" y="0.5" width="8" height="8" fill="#f6f6f8" stroke="#b0b4c0"/><path d="M2 4.5h5" stroke="#3a3a3a" stroke-width="1.1"/><path d="M4.5 2v5" stroke="#3a3a3a" stroke-width="1.1"/></svg>
<svg style="left:35px;top:366.2px" width="12" height="11" viewBox="0 0 12 11"><rect x="0.5" y="0.5" width="11" height="10" fill="#f4f4f4" stroke="#a0a0a0"/><path d="M0.5 3.5h11M0.5 7h11M4 0.5v10M8 0.5v10" stroke="#c8c8c8"/></svg>
<div class="t" style="left:51.5px;top:366.5px;font-size:9.4px;color:#141414">EDMPatientLogDs</div>
<svg style="left:22px;top:382px" width="9" height="9" viewBox="0 0 9 9"><rect x="0.5" y="0.5" width="8" height="8" fill="#f6f6f8" stroke="#b0b4c0"/><path d="M2 4.5h5" stroke="#3a3a3a" stroke-width="1.1"/><path d="M4.5 2v5" stroke="#3a3a3a" stroke-width="1.1"/></svg>
<svg style="left:35px;top:380.6px" width="12" height="11" viewBox="0 0 12 11"><rect x="0.5" y="0.5" width="11" height="10" fill="#f4f4f4" stroke="#a0a0a0"/><path d="M0.5 3.5h11M0.5 7h11M4 0.5v10M8 0.5v10" stroke="#c8c8c8"/></svg>
<div class="t" style="left:51.5px;top:380.9px;font-size:9.4px;color:#141414">EDMedianTimingDs</div>
<svg style="left:22px;top:396px" width="9" height="9" viewBox="0 0 9 9"><rect x="0.5" y="0.5" width="8" height="8" fill="#f6f6f8" stroke="#b0b4c0"/><path d="M2 4.5h5" stroke="#3a3a3a" stroke-width="1.1"/><path d="M4.5 2v5" stroke="#3a3a3a" stroke-width="1.1"/></svg>
<svg style="left:35px;top:395.0px" width="12" height="11" viewBox="0 0 12 11"><rect x="0.5" y="0.5" width="11" height="10" fill="#f4f4f4" stroke="#a0a0a0"/><path d="M0.5 3.5h11M0.5 7h11M4 0.5v10M8 0.5v10" stroke="#c8c8c8"/></svg>
<div class="t" style="left:51.5px;top:395.3px;font-size:9.4px;color:#141414">ConvertFromDateDs</div>
<svg style="left:22px;top:411px" width="9" height="9" viewBox="0 0 9 9"><rect x="0.5" y="0.5" width="8" height="8" fill="#f6f6f8" stroke="#b0b4c0"/><path d="M2 4.5h5" stroke="#3a3a3a" stroke-width="1.1"/><path d="M4.5 2v5" stroke="#3a3a3a" stroke-width="1.1"/></svg>
<svg style="left:35px;top:409.4px" width="12" height="11" viewBox="0 0 12 11"><rect x="0.5" y="0.5" width="11" height="10" fill="#f4f4f4" stroke="#a0a0a0"/><path d="M0.5 3.5h11M0.5 7h11M4 0.5v10M8 0.5v10" stroke="#c8c8c8"/></svg>
<div class="t" style="left:51.5px;top:409.7px;font-size:9.4px;color:#141414">ConvertThruDateDs</div>
<div class="a" style="left:49.5px;top:393.8px;width:88.5px;height:14.4px;background:#2f7ad0"></div>
<div class="t" style="left:51.5px;top:395.3px;font-size:9.4px;color:#fff">ConvertFromDateDs</div>
<div class="a" style="left:4px;top:300.5px;width:157.5px;height:135px;border:1.5px solid #c8303a"></div>
<!-- document area -->
<div class="a" style="left:294px;top:79px;width:921px;height:736px;background:#f4f6fa"></div>
<!-- active tab -->
<svg style="left:296px;top:80px" width="186" height="20" viewBox="0 0 186 20"><defs><linearGradient id="gt" x1="0" y1="0" x2="0" y2="1"><stop offset="0" stop-color="#ffffff"/><stop offset="1" stop-color="#dce9f5"/></linearGradient></defs><path d="M1 19.5L14 1.5h170.5v18z" fill="url(#gt)" stroke="#a9c0d4"/></svg>
<div class="t" style="left:312px;top:86px;font-size:9.2px;font-weight:bold;color:#111;letter-spacing:-0.12px">EDM_zcus_iatric_e...board.rdl [Design]</div>
<div class="a" style="left:481px;top:83.5px;width:52px;height:15px;background:linear-gradient(#d6e5f3,#b5d0e8);border:1px solid #9fbad3;border-bottom:0;border-radius:2px 2px 0 0"></div>
<div class="t" style="left:486px;top:87.5px;font-size:9.1px;color:#1e2a36">Start Page</div>
<div class="tri" style="left:1183.5px;top:88px;border-width:3.5px 3.2px 0"></div>
<svg style="left:1197px;top:85.5px" width="8" height="7" viewBox="0 0 8 7"><path d="M0.5 0.5L7.5 6.5M7.5 0.5L0.5 6.5" stroke="#111" stroke-width="1.6"/></svg>
<!-- frame -->
<div class="a" style="left:294px;top:122px;width:3px;height:690px;background:#eef3f8"></div>
<div class="a" style="left:297px;top:97px;width:915px;height:717px;background:#dbeaf5;border:1px solid #a5bccd;border-radius:3px"></div>
<div class="a" style="left:300.5px;top:100px;width:908.5px;height:712px;background:#fff;border:1px solid #99a7b3"></div>
<!-- design / preview tabs -->
<div class="a" style="left:301.5px;top:121px;width:907px;height:1px;background:#a7a7a7"></div>
<div class="a" style="left:304px;top:104px;width:54px;height:18px;background:linear-gradient(#fbfbfc,#eceef1);border:1px solid #a4a4a4;border-bottom:0;border-radius:3px 3px 0 0"></div>
<svg style="left:306.5px;top:105px" width="13" height="14" viewBox="0 0 13 14"><rect x="4" y="1" width="8" height="11" fill="#e7ecf4" stroke="#8090a8" stroke-width=".8"/><path d="M1 2L10 12" stroke="#c9a030" stroke-width="3"/><path d="M1 2L10 12" stroke="#e8c860" stroke-width="1.2"/></svg>
<div class="t" style="left:324.5px;top:107.8px;font-size:8.3px;color:#222">Design</div>
<svg style="left:361px;top:105px" width="13" height="14" viewBox="0 0 13 14"><rect x="0.5" y="0.5" width="9" height="12" fill="#f2f4f8" stroke="#8a94a8" stroke-width=".8"/><path d="M2 3h5M2 5h5M2 7h3" stroke="#9aa"/><circle cx="7.5" cy="8.5" r="2.5" fill="#dde6f2" stroke="#556"/><path d="M9 10.5l3 3" stroke="#b08830" stroke-width="1.5"/></svg>
<div class="t" style="left:378.5px;top:107.8px;font-size:8.4px;color:#222">Preview</div>
<!-- design surface -->
<div class="a" style="left:301.5px;top:122px;width:907px;height:629px;background:#fdfae8"></div>
<!-- row/column groups -->
<div class="a" style="left:301.5px;top:751px;width:907px;height:60px;background:#ececec;border-top:1px solid #e0ddd0"></div>
<svg style="left:303px;top:757px" width="13" height="11" viewBox="0 0 13 11"><rect x="0.5" y="0.5" width="12" height="10" fill="#f4f4f8" stroke="#666"/><rect x="1" y="1" width="2.5" height="9" fill="#b8a870"/><path d="M3.5 0.5v10M3.5 3.5h9M3.5 6h9M3.5 8.5h9" stroke="#555" stroke-width=".9"/></svg>
<div class="t" style="left:322.5px;top:759px;font-size:8.4px;color:#9a9a9a">Row Groups</div>
<svg style="left:757px;top:757px" width="14" height="11" viewBox="0 0 14 11"><rect x="0.5" y="0.5" width="13" height="10" fill="#f4f4f8" stroke="#666"/><rect x="1" y="1" width="12" height="2" fill="#b8a870"/><path d="M0.5 3h13M4 3v7.5M7 3v7.5M10 3v7.5" stroke="#555" stroke-width=".9"/></svg>
<div class="t" style="left:776.5px;top:759px;font-size:8.4px;color:#9a9a9a">Column Groups</div>
<div class="tri" style="left:1197px;top:762px;border-width:3.5px 3px 0;border-top-color:#555"></div>
<div class="a" style="left:301.5px;top:771px;width:452px;height:40px;background:#fff;border:1px solid #8f969c"></div>
<div class="a" style="left:755px;top:771px;width:453px;height:40px;background:#fff;border:1px solid #8f969c"></div>

<div class="a" style="left:317px;top:141px;width:769px;height:587px;background:#fff;border:1.5px solid #3a3a3a;box-shadow:1.5px 1.5px 0 #000"></div>
<div class="a" style="left:326px;top:153px;width:570px;height:37.5px;border:1px dotted #ababab"></div>
<div class="a" style="left:326px;top:173.5px;width:570px;height:1px;background:#b9b9b9"></div>
<div class="t" style="left:328.3px;top:156.3px;font-size:12.9px;font-weight:bold;color:#111">Emergency Department Dashboard</div>
<div class="t" style="left:328px;top:178px;font-size:8.3px;color:#222">«Expr»</div>
<div class="a" style="left:918px;top:150.5px;width:161.5px;height:39.5px;border:1px dotted #ababab"></div>
<div class="a" style="left:918px;top:150.5px;width:11.5px;height:13px;background:#fff;border:1px solid #333;border-right-width:1.5px;border-bottom-width:1.5px"></div>
<svg style="left:921px;top:154px" width="6" height="6" viewBox="0 0 6 6"><path d="M0.5 0.5L5.5 5.5M5.5 0.5L0.5 5.5" stroke="#d02030" stroke-width="1.3"/></svg>
<div class="a" style="left:318px;top:195.5px;width:767px;height:1px;border-top:1px dotted #b5b5b5"></div>
<div class="a" style="left:318px;top:695.8px;width:767px;height:1px;border-top:1px dotted #b5b5b5"></div>
<div class="a" style="left:326px;top:701px;width:155px;height:20.5px;border:1px dotted #ababab"></div>
<div class="t" style="left:328px;top:705.5px;font-size:8.3px;color:#222">«Expr»</div>
<div class="a" style="left:485px;top:701px;width:437.5px;height:20.5px;border:1px dotted #ababab"></div>
<div class="t" style="left:689px;top:705.5px;font-size:8.3px;color:#222">«Expr»</div>
<div class="a" style="left:926px;top:701px;width:152px;height:20.5px;border:1px dotted #ababab"></div>
<div class="t" style="left:1047.5px;top:705.5px;font-size:8.3px;color:#222">«Expr»</div>
<div class="a" style="left:326.0px;top:198.0px;width:155.0px;height:17.5px;background:#fff;border:1px dotted #ababab;overflow:hidden;padding:3px 0 0 2px"><span style="white-space:nowrap;line-height:10px;font-size:8.4px;font-weight:bold;letter-spacing:0.42px;color:#1a1a1a">Census Summary</span></div>
<div class="a" style="left:326.0px;top:215.0px;width:78.0px;height:17.0px;background:#dae9f2;border:1px solid #d9d9d9;display:flex;justify-content:center;align-items:center;overflow:hidden;padding:0 0px;padding-top:1.5px;"><span style="white-space:nowrap;line-height:10.5px;text-align:center;font-size:8.4px;font-weight:bold;letter-spacing:0.5px;color:#1a1a1a">Visits</span></div>
<div class="a" style="left:326.0px;top:231.0px;width:78.0px;height:17.0px;background:#dae9f2;border:1px solid #d9d9d9;display:flex;justify-content:center;align-items:center;overflow:hidden;padding:0 0px;padding-top:1.5px;"><span style="white-space:nowrap;line-height:10.5px;text-align:center;font-size:8.4px;font-weight:bold;letter-spacing:0.5px;color:#1a1a1a"></span></div>
<div class="a" style="left:326.0px;top:247.0px;width:78.0px;height:16.0px;background:#fff;border:1px solid #d9d9d9;display:flex;justify-content:center;align-items:center;overflow:hidden;padding:0 0px;padding-top:1.5px;"><span style="white-space:nowrap;line-height:10.5px;text-align:center;font-size:8.3px;color:#222">ountDistinct(VISIT_II</span></div>
<div class="a" style="left:403.0px;top:215.0px;width:78.0px;height:17.0px;background:#e5ebd9;border:1px solid #d9d9d9;display:flex;justify-content:center;align-items:center;overflow:hidden;padding:0 0px;padding-top:1.5px;"><span style="white-space:nowrap;line-height:10.5px;text-align:center;font-size:8.4px;font-weight:bold;letter-spacing:0.5px;color:#1a1a1a">Admissions</span></div>
<div class="a" style="left:403.0px;top:231.0px;width:39.0px;height:17.0px;background:#e5ebd9;border:1px solid #d9d9d9;display:flex;justify-content:center;align-items:center;overflow:hidden;padding:0 0px;padding-top:1.5px;"><span style="white-space:nowrap;line-height:10.5px;text-align:center;font-size:8.4px;font-weight:bold;letter-spacing:0.5px;color:#1a1a1a">#</span></div>
<div class="a" style="left:441.0px;top:231.0px;width:40.0px;height:17.0px;background:#e5ebd9;border:1px solid #d9d9d9;display:flex;justify-content:center;align-items:center;overflow:hidden;padding:0 0px;padding-top:1.5px;"><span style="white-space:nowrap;line-height:10.5px;text-align:center;font-size:8.4px;font-weight:bold;letter-spacing:0.5px;color:#1a1a1a">%</span></div>
<div class="a" style="left:403.0px;top:247.0px;width:39.0px;height:16.0px;background:#fff;border:1px solid #d9d9d9;display:flex;justify-content:center;align-items:center;overflow:hidden;padding:0 0px;padding-top:1.5px;"><span style="white-space:nowrap;line-height:10.5px;text-align:center;font-size:8.3px;color:#3030b8;text-decoration:underline">MITTED_F</span></div>
<div class="a" style="left:441.0px;top:247.0px;width:40.0px;height:16.0px;background:#fff;border:1px solid #d9d9d9;display:flex;justify-content:center;align-items:center;overflow:hidden;padding:0 0px;padding-top:1.5px;"><span style="white-space:nowrap;line-height:10.5px;text-align:center;font-size:8.3px;color:#222">«Expr»</span></div>
<div class="a" style="left:480.0px;top:215.0px;width:78.0px;height:17.0px;background:#dae9f2;border:1px solid #d9d9d9;display:flex;justify-content:center;align-items:center;overflow:hidden;padding:0 0px;padding-top:1.5px;"><span style="white-space:nowrap;line-height:10.5px;text-align:center;font-size:8.4px;font-weight:bold;letter-spacing:0.5px;color:#1a1a1a">Observations</span></div>
<div class="a" style="left:480.0px;top:231.0px;width:39.0px;height:17.0px;background:#dae9f2;border:1px solid #d9d9d9;display:flex;justify-content:center;align-items:center;overflow:hidden;padding:0 0px;padding-top:1.5px;"><span style="white-space:nowrap;line-height:10.5px;text-align:center;font-size:8.4px;font-weight:bold;letter-spacing:0.5px;color:#1a1a1a">#</span></div>
<div class="a" style="left:518.0px;top:231.0px;width:40.0px;height:17.0px;background:#dae9f2;border:1px solid #d9d9d9;display:flex;justify-content:center;align-items:center;overflow:hidden;padding:0 0px;padding-top:1.5px;"><span style="white-space:nowrap;line-height:10.5px;text-align:center;font-size:8.4px;font-weight:bold;letter-spacing:0.5px;color:#1a1a1a">%</span></div>
<div class="a" style="left:480.0px;top:247.0px;width:39.0px;height:16.0px;background:#fff;border:1px solid #d9d9d9;display:flex;justify-content:center;align-items:center;overflow:hidden;padding:0 0px;padding-top:1.5px;"><span style="white-space:nowrap;line-height:10.5px;text-align:center;font-size:8.3px;color:#3030b8;text-decoration:underline">RVATION</span></div>
<div class="a" style="left:518.0px;top:247.0px;width:40.0px;height:16.0px;background:#fff;border:1px solid #d9d9d9;display:flex;justify-content:center;align-items:center;overflow:hidden;padding:0 0px;padding-top:1.5px;"><span style="white-space:nowrap;line-height:10.5px;text-align:center;font-size:8.3px;color:#222">«Expr»</span></div>
<div class="a" style="left:557.0px;top:215.0px;width:77.0px;height:17.0px;background:#e5ebd9;border:1px solid #d9d9d9;display:flex;justify-content:center;align-items:center;overflow:hidden;padding:0 0px;padding-top:1.5px;"><span style="white-space:nowrap;line-height:10.5px;text-align:center;font-size:8.4px;font-weight:bold;letter-spacing:0.5px;color:#1a1a1a">Transfers</span></div>
<div class="a" style="left:557.0px;top:231.0px;width:39.0px;height:17.0px;background:#e5ebd9;border:1px solid #d9d9d9;display:flex;justify-content:center;align-items:center;overflow:hidden;padding:0 0px;padding-top:1.5px;"><span style="white-space:nowrap;line-height:10.5px;text-align:center;font-size:8.4px;font-weight:bold;letter-spacing:0.5px;color:#1a1a1a">#</span></div>
<div class="a" style="left:595.0px;top:231.0px;width:39.0px;height:17.0px;background:#e5ebd9;border:1px solid #d9d9d9;display:flex;justify-content:center;align-items:center;overflow:hidden;padding:0 0px;padding-top:1.5px;"><span style="white-space:nowrap;line-height:10.5px;text-align:center;font-size:8.4px;font-weight:bold;letter-spacing:0.5px;color:#1a1a1a">%</span></div>
<div class="a" style="left:557.0px;top:247.0px;width:39.0px;height:16.0px;background:#fff;border:1px solid #d9d9d9;display:flex;justify-content:center;align-items:center;overflow:hidden;padding:0 0px;padding-top:1.5px;"><span style="white-space:nowrap;line-height:10.5px;text-align:center;font-size:8.3px;color:#3030b8;text-decoration:underline">SFERRED</span></div>
<div class="a" style="left:595.0px;top:247.0px;width:39.0px;height:16.0px;background:#fff;border:1px solid #d9d9d9;display:flex;justify-content:center;align-items:center;overflow:hidden;padding:0 0px;padding-top:1.5px;"><span style="white-space:nowrap;line-height:10.5px;text-align:center;font-size:8.3px;color:#222">«Expr»</span></div>
<div class="a" style="left:633.0px;top:215.0px;width:78.0px;height:17.0px;background:#dae9f2;border:1px solid #d9d9d9;display:flex;justify-content:center;align-items:center;overflow:hidden;padding:0 0px;padding-top:1.5px;"><span style="white-space:nowrap;line-height:10.5px;text-align:center;font-size:8.4px;font-weight:bold;letter-spacing:0.5px;color:#1a1a1a">AMA</span></div>
<div class="a" style="left:633.0px;top:231.0px;width:40.0px;height:17.0px;background:#dae9f2;border:1px solid #d9d9d9;display:flex;justify-content:center;align-items:center;overflow:hidden;padding:0 0px;padding-top:1.5px;"><span style="white-space:nowrap;line-height:10.5px;text-align:center;font-size:8.4px;font-weight:bold;letter-spacing:0.5px;color:#1a1a1a">#</span></div>
<div class="a" style="left:672.0px;top:231.0px;width:39.0px;height:17.0px;background:#dae9f2;border:1px solid #d9d9d9;display:flex;justify-content:center;align-items:center;overflow:hidden;padding:0 0px;padding-top:1.5px;"><span style="white-space:nowrap;line-height:10.5px;text-align:center;font-size:8.4px;font-weight:bold;letter-spacing:0.5px;color:#1a1a1a">%</span></div>
<div class="a" style="left:633.0px;top:247.0px;width:40.0px;height:16.0px;background:#fff;border:1px solid #d9d9d9;display:flex;justify-content:center;align-items:center;overflow:hidden;padding:0 0px;padding-top:1.5px;"><span style="white-space:nowrap;line-height:10.5px;text-align:center;font-size:8.3px;color:#3030b8;text-decoration:underline">AMA_PAT</span></div>
<div class="a" style="left:672.0px;top:247.0px;width:39.0px;height:16.0px;background:#fff;border:1px solid #d9d9d9;display:flex;justify-content:center;align-items:center;overflow:hidden;padding:0 0px;padding-top:1.5px;"><span style="white-space:nowrap;line-height:10.5px;text-align:center;font-size:8.3px;color:#222">«Expr»</span></div>
<div class="a" style="left:710.0px;top:215.0px;width:78.0px;height:17.0px;background:#e5ebd9;border:1px solid #d9d9d9;display:flex;justify-content:center;align-items:center;overflow:hidden;padding:0 0px;padding-top:1.5px;"><span style="white-space:nowrap;line-height:10.5px;text-align:center;font-size:8.4px;font-weight:bold;letter-spacing:0.5px;color:#1a1a1a">LWOT</span></div>
<div class="a" style="left:710.0px;top:231.0px;width:39.0px;height:17.0px;background:#e5ebd9;border:1px solid #d9d9d9;display:flex;justify-content:center;align-items:center;overflow:hidden;padding:0 0px;padding-top:1.5px;"><span style="white-space:nowrap;line-height:10.5px;text-align:center;font-size:8.4px;font-weight:bold;letter-spacing:0.5px;color:#1a1a1a">#</span></div>
<div class="a" style="left:748.0px;top:231.0px;width:40.0px;height:17.0px;background:#e5ebd9;border:1px solid #d9d9d9;display:flex;justify-content:center;align-items:center;overflow:hidden;padding:0 0px;padding-top:1.5px;"><span style="white-space:nowrap;line-height:10.5px;text-align:center;font-size:8.4px;font-weight:bold;letter-spacing:0.5px;color:#1a1a1a">%</span></div>
<div class="a" style="left:710.0px;top:247.0px;width:39.0px;height:16.0px;background:#fff;border:1px solid #d9d9d9;display:flex;justify-content:center;align-items:center;overflow:hidden;padding:0 0px;padding-top:1.5px;"><span style="white-space:nowrap;line-height:10.5px;text-align:center;font-size:8.3px;color:#3030b8;text-decoration:underline">WOT_PA</span></div>
<div class="a" style="left:748.0px;top:247.0px;width:40.0px;height:16.0px;background:#fff;border:1px solid #d9d9d9;display:flex;justify-content:center;align-items:center;overflow:hidden;padding:0 0px;padding-top:1.5px;"><span style="white-space:nowrap;line-height:10.5px;text-align:center;font-size:8.3px;color:#222">«Expr»</span></div>
<div class="a" style="left:787.0px;top:215.0px;width:78.0px;height:17.0px;background:#dae9f2;border:1px solid #d9d9d9;display:flex;justify-content:center;align-items:center;overflow:hidden;padding:0 0px;padding-top:1.5px;"><span style="white-space:nowrap;line-height:10.5px;text-align:center;font-size:8.4px;font-weight:bold;letter-spacing:0.5px;color:#1a1a1a">AMA+LWOT</span></div>
<div class="a" style="left:787.0px;top:231.0px;width:39.0px;height:17.0px;background:#dae9f2;border:1px solid #d9d9d9;display:flex;justify-content:center;align-items:center;overflow:hidden;padding:0 0px;padding-top:1.5px;"><span style="white-space:nowrap;line-height:10.5px;text-align:center;font-size:8.4px;font-weight:bold;letter-spacing:0.5px;color:#1a1a1a">#</span></div>
<div class="a" style="left:825.0px;top:231.0px;width:40.0px;height:17.0px;background:#dae9f2;border:1px solid #d9d9d9;display:flex;justify-content:center;align-items:center;overflow:hidden;padding:0 0px;padding-top:1.5px;"><span style="white-space:nowrap;line-height:10.5px;text-align:center;font-size:8.4px;font-weight:bold;letter-spacing:0.5px;color:#1a1a1a">%</span></div>
<div class="a" style="left:787.0px;top:247.0px;width:39.0px;height:16.0px;background:#fff;border:1px solid #d9d9d9;display:flex;justify-content:center;align-items:center;overflow:hidden;padding:0 0px;padding-top:1.5px;"><span style="white-space:nowrap;line-height:10.5px;text-align:center;font-size:8.3px;color:#222">«Expr»</span></div>
<div class="a" style="left:825.0px;top:247.0px;width:40.0px;height:16.0px;background:#fff;border:1px solid #d9d9d9;display:flex;justify-content:center;align-items:center;overflow:hidden;padding:0 0px;padding-top:1.5px;"><span style="white-space:nowrap;line-height:10.5px;text-align:center;font-size:8.3px;color:#222">«Expr»</span></div>
<div class="a" style="left:864.0px;top:215.0px;width:77.0px;height:17.0px;background:#e5ebd9;border:1px solid #d9d9d9;display:flex;justify-content:center;align-items:center;overflow:hidden;padding:0 0px;padding-top:1.5px;"><span style="white-space:nowrap;line-height:10.5px;text-align:center;font-size:8.4px;font-weight:bold;letter-spacing:0.5px;color:#1a1a1a">LPT</span></div>
<div class="a" style="left:864.0px;top:231.0px;width:39.0px;height:17.0px;background:#e5ebd9;border:1px solid #d9d9d9;display:flex;justify-content:center;align-items:center;overflow:hidden;padding:0 0px;padding-top:1.5px;"><span style="white-space:nowrap;line-height:10.5px;text-align:center;font-size:8.4px;font-weight:bold;letter-spacing:0.5px;color:#1a1a1a">#</span></div>
<div class="a" style="left:902.0px;top:231.0px;width:39.0px;height:17.0px;background:#e5ebd9;border:1px solid #d9d9d9;display:flex;justify-content:center;align-items:center;overflow:hidden;padding:0 0px;padding-top:1.5px;"><span style="white-space:nowrap;line-height:10.5px;text-align:center;font-size:8.4px;font-weight:bold;letter-spacing:0.5px;color:#1a1a1a">%</span></div>
<div class="a" style="left:864.0px;top:247.0px;width:39.0px;height:16.0px;background:#fff;border:1px solid #d9d9d9;display:flex;justify-content:center;align-items:center;overflow:hidden;padding:0 0px;padding-top:1.5px;"><span style="white-space:nowrap;line-height:10.5px;text-align:center;font-size:8.3px;color:#3030b8;text-decoration:underline">_PT_PAT</span></div>
<div class="a" style="left:902.0px;top:247.0px;width:39.0px;height:16.0px;background:#fff;border:1px solid #d9d9d9;display:flex;justify-content:center;align-items:center;overflow:hidden;padding:0 0px;padding-top:1.5px;"><span style="white-space:nowrap;line-height:10.5px;text-align:center;font-size:8.3px;color:#222">«Expr»</span></div>
<div class="a" style="left:940.0px;top:215.0px;width:79.0px;height:17.0px;background:#dae9f2;border:1px solid #d9d9d9;display:flex;justify-content:center;align-items:center;overflow:hidden;padding:0 0px;padding-top:1.5px;"><span style="white-space:nowrap;line-height:10.5px;text-align:center;font-size:8.4px;font-weight:bold;letter-spacing:0.5px;color:#1a1a1a">Visits w/CT</span></div>
<div class="a" style="left:940.0px;top:231.0px;width:40.0px;height:17.0px;background:#dae9f2;border:1px solid #d9d9d9;display:flex;justify-content:center;align-items:center;overflow:hidden;padding:0 0px;padding-top:1.5px;"><span style="white-space:nowrap;line-height:10.5px;text-align:center;font-size:8.4px;font-weight:bold;letter-spacing:0.5px;color:#1a1a1a">#</span></div>
<div class="a" style="left:979.0px;top:231.0px;width:40.0px;height:17.0px;background:#dae9f2;border:1px solid #d9d9d9;display:flex;justify-content:center;align-items:center;overflow:hidden;padding:0 0px;padding-top:1.5px;"><span style="white-space:nowrap;line-height:10.5px;text-align:center;font-size:8.4px;font-weight:bold;letter-spacing:0.5px;color:#1a1a1a">%</span></div>
<div class="a" style="left:940.0px;top:247.0px;width:40.0px;height:16.0px;background:#fff;border:1px solid #d9d9d9;display:flex;justify-content:center;align-items:center;overflow:hidden;padding:0 0px;padding-top:1.5px;"><span style="white-space:nowrap;line-height:10.5px;text-align:center;font-size:8.3px;color:#3030b8;text-decoration:underline">CT_PATI</span></div>
<div class="a" style="left:979.0px;top:247.0px;width:40.0px;height:16.0px;background:#fff;border:1px solid #d9d9d9;display:flex;justify-content:center;align-items:center;overflow:hidden;padding:0 0px;padding-top:1.5px;"><span style="white-space:nowrap;line-height:10.5px;text-align:center;font-size:8.3px;color:#222">«Expr»</span></div>
<div class="a" style="left:326.0px;top:266.7px;width:155.0px;height:17.0px;background:#fff;border:1px dotted #ababab;overflow:hidden;padding:3px 0 0 2px"><span style="white-space:nowrap;line-height:10px;font-size:8.4px;font-weight:bold;letter-spacing:0.42px;color:#1a1a1a">Patients 65 and Older</span></div>
<div class="a" style="left:326.0px;top:283.0px;width:78.0px;height:17.0px;background:#dae9f2;border:1px solid #d9d9d9;display:flex;justify-content:center;align-items:center;overflow:hidden;padding:0 0px;padding-top:1.5px;"><span style="white-space:nowrap;line-height:10.5px;text-align:center;font-size:8.4px;font-weight:bold;letter-spacing:0.5px;color:#1a1a1a">Visits</span></div>
<div class="a" style="left:326.0px;top:299.0px;width:78.0px;height:17.0px;background:#dae9f2;border:1px solid #d9d9d9;display:flex;justify-content:center;align-items:center;overflow:hidden;padding:0 0px;padding-top:1.5px;"><span style="white-space:nowrap;line-height:10.5px;text-align:center;font-size:8.4px;font-weight:bold;letter-spacing:0.5px;color:#1a1a1a">#</span></div>
<div class="a" style="left:326.0px;top:315.0px;width:78.0px;height:16.0px;background:#fff;border:1px solid #d9d9d9;display:flex;justify-content:center;align-items:center;overflow:hidden;padding:0 0px;padding-top:1.5px;"><span style="white-space:nowrap;line-height:10.5px;text-align:center;font-size:8.3px;color:#222">ountDistinct(VISIT_II</span></div>
<div class="a" style="left:403.0px;top:283.0px;width:78.0px;height:17.0px;background:#e5ebd9;border:1px solid #d9d9d9;display:flex;justify-content:center;align-items:center;overflow:hidden;padding:0 0px;padding-top:1.5px;"><span style="white-space:nowrap;line-height:10.5px;text-align:center;font-size:8.4px;font-weight:bold;letter-spacing:0.5px;color:#1a1a1a">Admissions</span></div>
<div class="a" style="left:403.0px;top:299.0px;width:39.0px;height:17.0px;background:#e5ebd9;border:1px solid #d9d9d9;display:flex;justify-content:center;align-items:center;overflow:hidden;padding:0 0px;padding-top:1.5px;"><span style="white-space:nowrap;line-height:10.5px;text-align:center;font-size:8.4px;font-weight:bold;letter-spacing:0.5px;color:#1a1a1a">#</span></div>
<div class="a" style="left:441.0px;top:299.0px;width:40.0px;height:17.0px;background:#e5ebd9;border:1px solid #d9d9d9;display:flex;justify-content:center;align-items:center;overflow:hidden;padding:0 0px;padding-top:1.5px;"><span style="white-space:nowrap;line-height:10.5px;text-align:center;font-size:8.4px;font-weight:bold;letter-spacing:0.5px;color:#1a1a1a">%</span></div>
<div class="a" style="left:403.0px;top:315.0px;width:39.0px;height:16.0px;background:#fff;border:1px solid #d9d9d9;display:flex;justify-content:center;align-items:center;overflow:hidden;padding:0 0px;padding-top:1.5px;"><span style="white-space:nowrap;line-height:10.5px;text-align:center;font-size:8.3px;color:#3030b8;text-decoration:underline">MITTED_F</span></div>
<div class="a" style="left:441.0px;top:315.0px;width:40.0px;height:16.0px;background:#fff;border:1px solid #d9d9d9;display:flex;justify-content:center;align-items:center;overflow:hidden;padding:0 0px;padding-top:1.5px;"><span style="white-space:nowrap;line-height:10.5px;text-align:center;font-size:8.3px;color:#222">«Expr»</span></div>
<div class="a" style="left:480.0px;top:283.0px;width:78.0px;height:17.0px;background:#dae9f2;border:1px solid #d9d9d9;display:flex;justify-content:center;align-items:center;overflow:hidden;padding:0 0px;padding-top:1.5px;"><span style="white-space:nowrap;line-height:10.5px;text-align:center;font-size:8.4px;font-weight:bold;letter-spacing:0.5px;color:#1a1a1a">Observations</span></div>
<div class="a" style="left:480.0px;top:299.0px;width:39.0px;height:17.0px;background:#dae9f2;border:1px solid #d9d9d9;display:flex;justify-content:center;align-items:center;overflow:hidden;padding:0 0px;padding-top:1.5px;"><span style="white-space:nowrap;line-height:10.5px;text-align:center;font-size:8.4px;font-weight:bold;letter-spacing:0.5px;color:#1a1a1a">#</span></div>
<div class="a" style="left:518.0px;top:299.0px;width:40.0px;height:17.0px;background:#dae9f2;border:1px solid #d9d9d9;display:flex;justify-content:center;align-items:center;overflow:hidden;padding:0 0px;padding-top:1.5px;"><span style="white-space:nowrap;line-height:10.5px;text-align:center;font-size:8.4px;font-weight:bold;letter-spacing:0.5px;color:#1a1a1a">%</span></div>
<div class="a" style="left:480.0px;top:315.0px;width:39.0px;height:16.0px;background:#fff;border:1px solid #d9d9d9;display:flex;justify-content:center;align-items:center;overflow:hidden;padding:0 0px;padding-top:1.5px;"><span style="white-space:nowrap;line-height:10.5px;text-align:center;font-size:8.3px;color:#3030b8;text-decoration:underline">RVATION</span></div>
<div class="a" style="left:518.0px;top:315.0px;width:40.0px;height:16.0px;background:#fff;border:1px solid #d9d9d9;display:flex;justify-content:center;align-items:center;overflow:hidden;padding:0 0px;padding-top:1.5px;"><span style="white-space:nowrap;line-height:10.5px;text-align:center;font-size:8.3px;color:#222">«Expr»</span></div>
<div class="a" style="left:557.0px;top:283.0px;width:77.0px;height:17.0px;background:#e5ebd9;border:1px solid #d9d9d9;display:flex;justify-content:center;align-items:center;overflow:hidden;padding:0 0px;padding-top:1.5px;"><span style="white-space:nowrap;line-height:10.5px;text-align:center;font-size:8.4px;font-weight:bold;letter-spacing:0.5px;color:#1a1a1a">Transfers</span></div>
<div class="a" style="left:557.0px;top:299.0px;width:39.0px;height:17.0px;background:#e5ebd9;border:1px solid #d9d9d9;display:flex;justify-content:center;align-items:center;overflow:hidden;padding:0 0px;padding-top:1.5px;"><span style="white-space:nowrap;line-height:10.5px;text-align:center;font-size:8.4px;font-weight:bold;letter-spacing:0.5px;color:#1a1a1a">#</span></div>
<div class="a" style="left:595.0px;top:299.0px;width:39.0px;height:17.0px;background:#e5ebd9;border:1px solid #d9d9d9;display:flex;justify-content:center;align-items:center;overflow:hidden;padding:0 0px;padding-top:1.5px;"><span style="white-space:nowrap;line-height:10.5px;text-align:center;font-size:8.4px;font-weight:bold;letter-spacing:0.5px;color:#1a1a1a">%</span></div>
<div class="a" style="left:557.0px;top:315.0px;width:39.0px;height:16.0px;background:#fff;border:1px solid #d9d9d9;display:flex;justify-content:center;align-items:center;overflow:hidden;padding:0 0px;padding-top:1.5px;"><span style="white-space:nowrap;line-height:10.5px;text-align:center;font-size:8.3px;color:#3030b8;text-decoration:underline">SFERRED</span></div>
<div class="a" style="left:595.0px;top:315.0px;width:39.0px;height:16.0px;background:#fff;border:1px solid #d9d9d9;display:flex;justify-content:center;align-items:center;overflow:hidden;padding:0 0px;padding-top:1.5px;"><span style="white-space:nowrap;line-height:10.5px;text-align:center;font-size:8.3px;color:#222">«Expr»</span></div>
<div class="a" style="left:633.0px;top:283.0px;width:78.0px;height:17.0px;background:#dae9f2;border:1px solid #d9d9d9;display:flex;justify-content:center;align-items:center;overflow:hidden;padding:0 0px;padding-top:1.5px;"><span style="white-space:nowrap;line-height:10.5px;text-align:center;font-size:8.4px;font-weight:bold;letter-spacing:0.5px;color:#1a1a1a">PCP Consulted</span></div>
<div class="a" style="left:633.0px;top:299.0px;width:40.0px;height:17.0px;background:#dae9f2;border:1px solid #d9d9d9;display:flex;justify-content:center;align-items:center;overflow:hidden;padding:0 0px;padding-top:1.5px;"><span style="white-space:nowrap;line-height:10.5px;text-align:center;font-size:8.4px;font-weight:bold;letter-spacing:0.5px;color:#1a1a1a">#</span></div>
<div class="a" style="left:672.0px;top:299.0px;width:39.0px;height:17.0px;background:#dae9f2;border:1px solid #d9d9d9;display:flex;justify-content:center;align-items:center;overflow:hidden;padding:0 0px;padding-top:1.5px;"><span style="white-space:nowrap;line-height:10.5px;text-align:center;font-size:8.4px;font-weight:bold;letter-spacing:0.5px;color:#1a1a1a">%</span></div>
<div class="a" style="left:633.0px;top:315.0px;width:40.0px;height:16.0px;background:#fff;border:1px solid #d9d9d9;display:flex;justify-content:center;align-items:center;overflow:hidden;padding:0 0px;padding-top:1.5px;"><span style="white-space:nowrap;line-height:10.5px;text-align:center;font-size:8.3px;color:#222">ONSULTI</span></div>
<div class="a" style="left:672.0px;top:315.0px;width:39.0px;height:16.0px;background:#fff;border:1px solid #d9d9d9;display:flex;justify-content:center;align-items:center;overflow:hidden;padding:0 0px;padding-top:1.5px;"><span style="white-space:nowrap;line-height:10.5px;text-align:center;font-size:8.3px;color:#222">«Expr»</span></div>
<div class="a" style="left:326.0px;top:334.6px;width:155.0px;height:16.8px;background:#fff;border:1px dotted #ababab;overflow:hidden;padding:3px 0 0 2px"><span style="white-space:nowrap;line-height:10px;font-size:8.4px;font-weight:bold;letter-spacing:0.42px;color:#1a1a1a">Risk Management</span></div>
<div class="a" style="left:326.0px;top:350.0px;width:78.0px;height:33.0px;background:#dae9f2;border:1px solid #d9d9d9;display:flex;justify-content:center;align-items:flex-start;overflow:hidden;padding:0 0px;padding-top:4px;"><span style="white-space:nowrap;line-height:10.5px;text-align:center;font-size:8.4px;font-weight:bold;letter-spacing:0.5px;color:#1a1a1a">Never Triaged</span></div>
<div class="a" style="left:326.0px;top:382.0px;width:39.0px;height:17.0px;background:#dae9f2;border:1px solid #d9d9d9;display:flex;justify-content:center;align-items:center;overflow:hidden;padding:0 0px;padding-top:1.5px;"><span style="white-space:nowrap;line-height:10.5px;text-align:center;font-size:8.4px;font-weight:bold;letter-spacing:0.5px;color:#1a1a1a">#</span></div>
<div class="a" style="left:364.0px;top:382.0px;width:40.0px;height:17.0px;background:#dae9f2;border:1px solid #d9d9d9;display:flex;justify-content:center;align-items:center;overflow:hidden;padding:0 0px;padding-top:1.5px;"><span style="white-space:nowrap;line-height:10.5px;text-align:center;font-size:8.4px;font-weight:bold;letter-spacing:0.5px;color:#1a1a1a">%</span></div>
<div class="a" style="left:326.0px;top:398.0px;width:39.0px;height:16.0px;background:#fff;border:1px solid #d9d9d9;display:flex;justify-content:center;align-items:center;overflow:hidden;padding:0 0px;padding-top:1.5px;"><span style="white-space:nowrap;line-height:10.5px;text-align:center;font-size:8.3px;color:#3030b8;text-decoration:underline">EVER_TR</span></div>
<div class="a" style="left:364.0px;top:398.0px;width:40.0px;height:16.0px;background:#fff;border:1px solid #d9d9d9;display:flex;justify-content:center;align-items:center;overflow:hidden;padding:0 0px;padding-top:1.5px;"><span style="white-space:nowrap;line-height:10.5px;text-align:center;font-size:8.3px;color:#222">«Expr»</span></div>
<div class="a" style="left:403.0px;top:350.0px;width:78.0px;height:33.0px;background:#e5ebd9;border:1px solid #d9d9d9;display:flex;justify-content:center;align-items:flex-start;overflow:hidden;padding:0 0px;padding-top:4px;"><span style="white-space:nowrap;line-height:10.5px;text-align:center;font-size:8.4px;font-weight:bold;letter-spacing:0.5px;color:#1a1a1a">Unscheduled<br>Returns 24Hrs</span></div>
<div class="a" style="left:403.0px;top:382.0px;width:39.0px;height:17.0px;background:#e5ebd9;border:1px solid #d9d9d9;display:flex;justify-content:center;align-items:center;overflow:hidden;padding:0 0px;padding-top:1.5px;"><span style="white-space:nowrap;line-height:10.5px;text-align:center;font-size:8.4px;font-weight:bold;letter-spacing:0.5px;color:#1a1a1a">#</span></div>
<div class="a" style="left:441.0px;top:382.0px;width:40.0px;height:17.0px;background:#e5ebd9;border:1px solid #d9d9d9;display:flex;justify-content:center;align-items:center;overflow:hidden;padding:0 0px;padding-top:1.5px;"><span style="white-space:nowrap;line-height:10.5px;text-align:center;font-size:8.4px;font-weight:bold;letter-spacing:0.5px;color:#1a1a1a">%</span></div>
<div class="a" style="left:403.0px;top:398.0px;width:39.0px;height:16.0px;background:#fff;border:1px solid #d9d9d9;display:flex;justify-content:center;align-items:center;overflow:hidden;padding:0 0px;padding-top:1.5px;"><span style="white-space:nowrap;line-height:10.5px;text-align:center;font-size:8.3px;color:#3030b8;text-decoration:underline">D_RETUR</span></div>
<div class="a" style="left:441.0px;top:398.0px;width:40.0px;height:16.0px;background:#fff;border:1px solid #d9d9d9;display:flex;justify-content:center;align-items:center;overflow:hidden;padding:0 0px;padding-top:1.5px;"><span style="white-space:nowrap;line-height:10.5px;text-align:center;font-size:8.3px;color:#222">«Expr»</span></div>
<div class="a" style="left:480.0px;top:350.0px;width:78.0px;height:33.0px;background:#dae9f2;border:1px solid #d9d9d9;display:flex;justify-content:center;align-items:flex-start;overflow:hidden;padding:0 0px;padding-top:4px;"><span style="white-space:nowrap;line-height:10.5px;text-align:center;font-size:8.4px;font-weight:bold;letter-spacing:0.5px;color:#1a1a1a">Unscheduled<br>Returns 48Hrs</span></div>
<div class="a" style="left:480.0px;top:382.0px;width:39.0px;height:17.0px;background:#dae9f2;border:1px solid #d9d9d9;display:flex;justify-content:center;align-items:center;overflow:hidden;padding:0 0px;padding-top:1.5px;"><span style="white-space:nowrap;line-height:10.5px;text-align:center;font-size:8.4px;font-weight:bold;letter-spacing:0.5px;color:#1a1a1a">#</span></div>
<div class="a" style="left:518.0px;top:382.0px;width:40.0px;height:17.0px;background:#dae9f2;border:1px solid #d9d9d9;display:flex;justify-content:center;align-items:center;overflow:hidden;padding:0 0px;padding-top:1.5px;"><span style="white-space:nowrap;line-height:10.5px;text-align:center;font-size:8.4px;font-weight:bold;letter-spacing:0.5px;color:#1a1a1a">%</span></div>
<div class="a" style="left:480.0px;top:398.0px;width:39.0px;height:16.0px;background:#fff;border:1px solid #d9d9d9;display:flex;justify-content:center;align-items:center;overflow:hidden;padding:0 0px;padding-top:1.5px;"><span style="white-space:nowrap;line-height:10.5px;text-align:center;font-size:8.3px;color:#3030b8;text-decoration:underline">D_RETUR</span></div>
<div class="a" style="left:518.0px;top:398.0px;width:40.0px;height:16.0px;background:#fff;border:1px solid #d9d9d9;display:flex;justify-content:center;align-items:center;overflow:hidden;padding:0 0px;padding-top:1.5px;"><span style="white-space:nowrap;line-height:10.5px;text-align:center;font-size:8.3px;color:#222">«Expr»</span></div>
<div class="a" style="left:557.0px;top:350.0px;width:77.0px;height:33.0px;background:#e5ebd9;border:1px solid #d9d9d9;display:flex;justify-content:center;align-items:flex-start;overflow:hidden;padding:0 0px;padding-top:4px;"><span style="white-space:nowrap;line-height:10.5px;text-align:center;font-size:8.4px;font-weight:bold;letter-spacing:0.5px;color:#1a1a1a">Unscheduled<br>Returns 72Hrs</span></div>
<div class="a" style="left:557.0px;top:382.0px;width:39.0px;height:17.0px;background:#e5ebd9;border:1px solid #d9d9d9;display:flex;justify-content:center;align-items:center;overflow:hidden;padding:0 0px;padding-top:1.5px;"><span style="white-space:nowrap;line-height:10.5px;text-align:center;font-size:8.4px;font-weight:bold;letter-spacing:0.5px;color:#1a1a1a">#</span></div>
<div class="a" style="left:595.0px;top:382.0px;width:39.0px;height:17.0px;background:#e5ebd9;border:1px solid #d9d9d9;display:flex;justify-content:center;align-items:center;overflow:hidden;padding:0 0px;padding-top:1.5px;"><span style="white-space:nowrap;line-height:10.5px;text-align:center;font-size:8.4px;font-weight:bold;letter-spacing:0.5px;color:#1a1a1a">%</span></div>
<div class="a" style="left:557.0px;top:398.0px;width:39.0px;height:16.0px;background:#fff;border:1px solid #d9d9d9;display:flex;justify-content:center;align-items:center;overflow:hidden;padding:0 0px;padding-top:1.5px;"><span style="white-space:nowrap;line-height:10.5px;text-align:center;font-size:8.3px;color:#3030b8;text-decoration:underline">ILED_RET</span></div>
<div class="a" style="left:595.0px;top:398.0px;width:39.0px;height:16.0px;background:#fff;border:1px solid #d9d9d9;display:flex;justify-content:center;align-items:center;overflow:hidden;padding:0 0px;padding-top:1.5px;"><span style="white-space:nowrap;line-height:10.5px;text-align:center;font-size:8.3px;color:#222">«Expr»</span></div>
<div class="a" style="left:633.0px;top:350.0px;width:78.0px;height:33.0px;background:#dae9f2;border:1px solid #d9d9d9;display:flex;justify-content:center;align-items:flex-start;overflow:hidden;padding:0 0px;padding-top:4px;"><span style="white-space:nowrap;line-height:10.5px;text-align:center;font-size:8.4px;font-weight:bold;letter-spacing:0.5px;color:#1a1a1a">Total</span></div>
<div class="a" style="left:633.0px;top:382.0px;width:78.0px;height:17.0px;background:#dae9f2;border:1px solid #d9d9d9;display:flex;justify-content:center;align-items:center;overflow:hidden;padding:0 0px;padding-top:1.5px;"><span style="white-space:nowrap;line-height:10.5px;text-align:center;font-size:8.4px;font-weight:bold;letter-spacing:0.1px;color:#1a1a1a">AMA/DOA/Exp</span></div>
<div class="a" style="left:633.0px;top:398.0px;width:78.0px;height:16.0px;background:#fff;border:1px solid #d9d9d9;display:flex;justify-content:center;align-items:center;overflow:hidden;padding:0 0px;padding-top:1.5px;"><span style="white-space:nowrap;line-height:10.5px;text-align:center;font-size:8.3px;color:#3030b8;text-decoration:underline">«Expr»</span></div>
<div class="a" style="left:326.0px;top:420.4px;width:155.5px;height:16.6px;background:#fff;border:1px dotted #ababab;overflow:hidden;padding:3px 0 0 2px"><span style="white-space:nowrap;line-height:10px;font-size:8.4px;font-weight:bold;letter-spacing:0.42px;color:#1a1a1a">Length of Stay Summary (Mean)</span></div>
<div class="a" style="left:326.0px;top:436.0px;width:78.0px;height:17.0px;background:#dae9f2;border:1px solid #d9d9d9;display:flex;justify-content:center;align-items:center;overflow:hidden;padding:0 0px;padding-top:1.5px;"><span style="white-space:nowrap;line-height:10.5px;text-align:center;font-size:8.4px;font-weight:bold;letter-spacing:0.5px;color:#1a1a1a">Average</span></div>
<div class="a" style="left:326.0px;top:452.0px;width:78.0px;height:16.0px;background:#dae9f2;border:1px solid #d9d9d9;display:flex;justify-content:center;align-items:center;overflow:hidden;padding:0 0px;padding-top:1.5px;"><span style="white-space:nowrap;line-height:10.5px;text-align:center;font-size:8.4px;font-weight:bold;letter-spacing:0.5px;color:#1a1a1a">LOS</span></div>
<div class="a" style="left:326.0px;top:467.0px;width:78.0px;height:17.0px;background:#fff;border:1px solid #d9d9d9;display:flex;justify-content:center;align-items:center;overflow:hidden;padding:0 0px;padding-top:1.5px;"><span style="white-space:nowrap;line-height:10.5px;text-align:center;font-size:8.3px;color:#222">«Expr»</span></div>
<div class="a" style="left:403.0px;top:436.0px;width:78.0px;height:17.0px;background:#e5ebd9;border:1px solid #d9d9d9;display:flex;justify-content:center;align-items:center;overflow:hidden;padding:0 0px;padding-top:1.5px;"><span style="white-space:nowrap;line-height:10.5px;text-align:center;font-size:8.4px;font-weight:bold;letter-spacing:0.5px;color:#1a1a1a">Admission</span></div>
<div class="a" style="left:403.0px;top:452.0px;width:78.0px;height:16.0px;background:#e5ebd9;border:1px solid #d9d9d9;display:flex;justify-content:center;align-items:center;overflow:hidden;padding:0 0px;padding-top:1.5px;"><span style="white-space:nowrap;line-height:10.5px;text-align:center;font-size:8.4px;font-weight:bold;letter-spacing:0.5px;color:#1a1a1a">LOS</span></div>
<div class="a" style="left:403.0px;top:467.0px;width:78.0px;height:17.0px;background:#fff;border:1px solid #d9d9d9;display:flex;justify-content:center;align-items:center;overflow:hidden;padding:0 0px;padding-top:1.5px;"><span style="white-space:nowrap;line-height:10.5px;text-align:center;font-size:8.3px;color:#222">«Expr»</span></div>
<div class="a" style="left:480.0px;top:436.0px;width:78.0px;height:17.0px;background:#dae9f2;border:1px solid #d9d9d9;display:flex;justify-content:center;align-items:center;overflow:hidden;padding:0 0px;padding-top:1.5px;"><span style="white-space:nowrap;line-height:10.5px;text-align:center;font-size:8.4px;font-weight:bold;letter-spacing:0.5px;color:#1a1a1a">Discharge</span></div>
<div class="a" style="left:480.0px;top:452.0px;width:78.0px;height:16.0px;background:#dae9f2;border:1px solid #d9d9d9;display:flex;justify-content:center;align-items:center;overflow:hidden;padding:0 0px;padding-top:1.5px;"><span style="white-space:nowrap;line-height:10.5px;text-align:center;font-size:8.4px;font-weight:bold;letter-spacing:0.5px;color:#1a1a1a">LOS</span></div>
<div class="a" style="left:480.0px;top:467.0px;width:78.0px;height:17.0px;background:#fff;border:1px solid #d9d9d9;display:flex;justify-content:center;align-items:center;overflow:hidden;padding:0 0px;padding-top:1.5px;"><span style="white-space:nowrap;line-height:10.5px;text-align:center;font-size:8.3px;color:#222">«Expr»</span></div>
<div class="a" style="left:557.0px;top:436.0px;width:77.0px;height:17.0px;background:#e5ebd9;border:1px solid #d9d9d9;display:flex;justify-content:center;align-items:center;overflow:hidden;padding:0 0px;padding-top:1.5px;"><span style="white-space:nowrap;line-height:10.5px;text-align:center;font-size:8.4px;font-weight:bold;letter-spacing:0.5px;color:#1a1a1a">Transfer</span></div>
<div class="a" style="left:557.0px;top:452.0px;width:77.0px;height:16.0px;background:#e5ebd9;border:1px solid #d9d9d9;display:flex;justify-content:center;align-items:center;overflow:hidden;padding:0 0px;padding-top:1.5px;"><span style="white-space:nowrap;line-height:10.5px;text-align:center;font-size:8.4px;font-weight:bold;letter-spacing:0.5px;color:#1a1a1a">LOS</span></div>
<div class="a" style="left:557.0px;top:467.0px;width:77.0px;height:17.0px;background:#fff;border:1px solid #d9d9d9;display:flex;justify-content:center;align-items:center;overflow:hidden;padding:0 0px;padding-top:1.5px;"><span style="white-space:nowrap;line-height:10.5px;text-align:center;font-size:8.3px;color:#222">«Expr»</span></div>
<div class="a" style="left:638.6px;top:420.3px;width:227.0px;height:16.9px;background:#fff;border:1px dotted #ababab;overflow:hidden;padding:3px 0 0 2px"><span style="white-space:nowrap;line-height:10px;font-size:8.4px;font-weight:bold;letter-spacing:0.42px;color:#1a1a1a">Length of Stay Summary (Median)</span></div>
<div class="a" style="left:639.0px;top:436.0px;width:72.0px;height:17.0px;background:#dae9f2;border:1px solid #d9d9d9;display:flex;justify-content:center;align-items:center;overflow:hidden;padding:0 0px;padding-top:1.5px;"><span style="white-space:nowrap;line-height:10.5px;text-align:center;font-size:8.4px;font-weight:bold;letter-spacing:0.5px;color:#1a1a1a">Average</span></div>
<div class="a" style="left:639.0px;top:452.0px;width:72.0px;height:17.0px;background:#dae9f2;border:1px solid #d9d9d9;display:flex;justify-content:center;align-items:center;overflow:hidden;padding:0 0px;padding-top:1.5px;"><span style="white-space:nowrap;line-height:10.5px;text-align:center;font-size:8.4px;font-weight:bold;letter-spacing:0.5px;color:#1a1a1a">LOS</span></div>
<div class="a" style="left:639.0px;top:468.0px;width:72.0px;height:16.0px;background:#fff;border:1px solid #d9d9d9;display:flex;justify-content:center;align-items:center;overflow:hidden;padding:0 0px;padding-top:1.5px;"><span style="white-space:nowrap;line-height:10.5px;text-align:center;font-size:8.3px;color:#222">«Expr»</span></div>
<div class="a" style="left:710.0px;top:436.0px;width:77.0px;height:17.0px;background:#e5ebd9;border:1px solid #d9d9d9;display:flex;justify-content:center;align-items:center;overflow:hidden;padding:0 0px;padding-top:1.5px;"><span style="white-space:nowrap;line-height:10.5px;text-align:center;font-size:8.4px;font-weight:bold;letter-spacing:0.5px;color:#1a1a1a">Admission</span></div>
<div class="a" style="left:710.0px;top:452.0px;width:77.0px;height:17.0px;background:#e5ebd9;border:1px solid #d9d9d9;display:flex;justify-content:center;align-items:center;overflow:hidden;padding:0 0px;padding-top:1.5px;"><span style="white-space:nowrap;line-height:10.5px;text-align:center;font-size:8.4px;font-weight:bold;letter-spacing:0.5px;color:#1a1a1a">LOS</span></div>
<div class="a" style="left:710.0px;top:468.0px;width:77.0px;height:16.0px;background:#fff;border:1px solid #d9d9d9;display:flex;justify-content:center;align-items:center;overflow:hidden;padding:0 0px;padding-top:1.5px;"><span style="white-space:nowrap;line-height:10.5px;text-align:center;font-size:8.3px;color:#222">«Expr»</span></div>
<div class="a" style="left:786.0px;top:436.0px;width:79.0px;height:17.0px;background:#dae9f2;border:1px solid #d9d9d9;display:flex;justify-content:center;align-items:center;overflow:hidden;padding:0 0px;padding-top:1.5px;"><span style="white-space:nowrap;line-height:10.5px;text-align:center;font-size:8.4px;font-weight:bold;letter-spacing:0.5px;color:#1a1a1a">Discharge</span></div>
<div class="a" style="left:786.0px;top:452.0px;width:79.0px;height:17.0px;background:#dae9f2;border:1px solid #d9d9d9;display:flex;justify-content:center;align-items:center;overflow:hidden;padding:0 0px;padding-top:1.5px;"><span style="white-space:nowrap;line-height:10.5px;text-align:center;font-size:8.4px;font-weight:bold;letter-spacing:0.5px;color:#1a1a1a">LOS</span></div>
<div class="a" style="left:786.0px;top:468.0px;width:79.0px;height:16.0px;background:#fff;border:1px solid #d9d9d9;display:flex;justify-content:center;align-items:center;overflow:hidden;padding:0 0px;padding-top:1.5px;"><span style="white-space:nowrap;line-height:10.5px;text-align:center;font-size:8.3px;color:#222">«Expr»</span></div>
<div class="a" style="left:864.0px;top:436.0px;width:77.0px;height:17.0px;background:#e5ebd9;border:1px solid #d9d9d9;display:flex;justify-content:center;align-items:center;overflow:hidden;padding:0 0px;padding-top:1.5px;"><span style="white-space:nowrap;line-height:10.5px;text-align:center;font-size:8.4px;font-weight:bold;letter-spacing:0.5px;color:#1a1a1a">Transfer</span></div>
<div class="a" style="left:864.0px;top:452.0px;width:77.0px;height:17.0px;background:#e5ebd9;border:1px solid #d9d9d9;display:flex;justify-content:center;align-items:center;overflow:hidden;padding:0 0px;padding-top:1.5px;"><span style="white-space:nowrap;line-height:10.5px;text-align:center;font-size:8.4px;font-weight:bold;letter-spacing:0.5px;color:#1a1a1a">LOS</span></div>
<div class="a" style="left:864.0px;top:468.0px;width:77.0px;height:16.0px;background:#fff;border:1px solid #d9d9d9;display:flex;justify-content:center;align-items:center;overflow:hidden;padding:0 0px;padding-top:1.5px;"><span style="white-space:nowrap;line-height:10.5px;text-align:center;font-size:8.3px;color:#222">«Expr»</span></div>
<div class="a" style="left:326.0px;top:490.0px;width:155.5px;height:17.0px;background:#fff;border:1px dotted #ababab;overflow:hidden;padding:3px 0 0 2px"><span style="white-space:nowrap;line-height:10px;font-size:8.4px;font-weight:bold;letter-spacing:0.42px;color:#1a1a1a">ED Process Timing (Mean)</span></div>
<div class="a" style="left:326.0px;top:506.0px;width:78.0px;height:33.0px;background:#dae9f2;border:1px solid #d9d9d9;display:flex;justify-content:center;align-items:flex-start;overflow:hidden;padding:0 0px;padding-top:4px;"><span style="white-space:nowrap;line-height:10.5px;text-align:center;font-size:8.4px;font-weight:bold;letter-spacing:0.5px;color:#1a1a1a">Door to Triage</span></div>
<div class="a" style="left:326.0px;top:538.0px;width:78.0px;height:17.0px;background:#fff;border:1px solid #d9d9d9;display:flex;justify-content:center;align-items:center;overflow:hidden;padding:0 0px;padding-top:1.5px;"><span style="white-space:nowrap;line-height:10.5px;text-align:center;font-size:8.3px;color:#222">«Expr»</span></div>
<div class="a" style="left:403.0px;top:506.0px;width:78.0px;height:33.0px;background:#e5ebd9;border:1px solid #d9d9d9;display:flex;justify-content:center;align-items:flex-start;overflow:hidden;padding:0 0px;padding-top:4px;"><span style="white-space:nowrap;line-height:10.5px;text-align:center;font-size:8.4px;font-weight:bold;letter-spacing:0.5px;color:#1a1a1a">Door to Room</span></div>
<div class="a" style="left:403.0px;top:538.0px;width:78.0px;height:17.0px;background:#fff;border:1px solid #d9d9d9;display:flex;justify-content:center;align-items:center;overflow:hidden;padding:0 0px;padding-top:1.5px;"><span style="white-space:nowrap;line-height:10.5px;text-align:center;font-size:8.3px;color:#222">«Expr»</span></div>
<div class="a" style="left:480.0px;top:506.0px;width:78.0px;height:33.0px;background:#dae9f2;border:1px solid #d9d9d9;display:flex;justify-content:center;align-items:flex-start;overflow:hidden;padding:0 0px;padding-top:4px;"><span style="white-space:nowrap;line-height:10.5px;text-align:center;font-size:8.4px;font-weight:bold;letter-spacing:0.5px;color:#1a1a1a">Door to MSE</span></div>
<div class="a" style="left:480.0px;top:538.0px;width:78.0px;height:17.0px;background:#fff;border:1px solid #d9d9d9;display:flex;justify-content:center;align-items:center;overflow:hidden;padding:0 0px;padding-top:1.5px;"><span style="white-space:nowrap;line-height:10.5px;text-align:center;font-size:8.3px;color:#222">«Expr»</span></div>
<div class="a" style="left:557.0px;top:506.0px;width:77.0px;height:33.0px;background:#e5ebd9;border:1px solid #d9d9d9;display:flex;justify-content:center;align-items:flex-start;overflow:hidden;padding:0 0px;padding-top:4px;"><span style="white-space:nowrap;line-height:10.5px;text-align:center;font-size:8.4px;font-weight:bold;letter-spacing:0.5px;color:#1a1a1a">Door to<br>Discharge</span></div>
<div class="a" style="left:557.0px;top:538.0px;width:77.0px;height:17.0px;background:#fff;border:1px solid #d9d9d9;display:flex;justify-content:center;align-items:center;overflow:hidden;padding:0 0px;padding-top:1.5px;"><span style="white-space:nowrap;line-height:10.5px;text-align:center;font-size:8.3px;color:#222">«Expr»</span></div>
<div class="a" style="left:638.6px;top:492.3px;width:155.7px;height:16.4px;background:#fff;border:1px dotted #ababab;overflow:hidden;padding:3px 0 0 2px"><span style="white-space:nowrap;line-height:10px;font-size:8.4px;font-weight:bold;letter-spacing:0.42px;color:#1a1a1a">Decision to Admit Timing (Mean)</span></div>
<div class="a" style="left:639.0px;top:508.0px;width:77.0px;height:31.0px;background:#dae9f2;border:1px solid #d9d9d9;display:flex;justify-content:center;align-items:flex-start;overflow:hidden;padding:0 0px;padding-top:2.5px;"><span style="white-space:nowrap;line-height:10.5px;text-align:center;font-size:8.4px;font-weight:bold;letter-spacing:0.5px;color:#1a1a1a">Door to Admit<br>Decision</span></div>
<div class="a" style="left:639.0px;top:538.0px;width:77.0px;height:17.0px;background:#fff;border:1px solid #d9d9d9;display:flex;justify-content:center;align-items:center;overflow:hidden;padding:0 0px;padding-top:1.5px;"><span style="white-space:nowrap;line-height:10.5px;text-align:center;font-size:8.3px;color:#222">«Expr»</span></div>
<div class="a" style="left:715.0px;top:508.0px;width:78.0px;height:31.0px;background:#e5ebd9;border:1px solid #d9d9d9;display:flex;justify-content:center;align-items:flex-start;overflow:hidden;padding:0 0px;padding-top:2.5px;"><span style="white-space:nowrap;line-height:10.5px;text-align:center;font-size:8.4px;font-weight:bold;letter-spacing:0.5px;color:#1a1a1a">MSE to Admit<br>Dec</span></div>
<div class="a" style="left:715.0px;top:538.0px;width:78.0px;height:17.0px;background:#fff;border:1px solid #d9d9d9;display:flex;justify-content:center;align-items:center;overflow:hidden;padding:0 0px;padding-top:1.5px;"><span style="white-space:nowrap;line-height:10.5px;text-align:center;font-size:8.3px;color:#222">«Expr»</span></div>
<div class="a" style="left:792.0px;top:508.0px;width:78.0px;height:31.0px;background:#dae9f2;border:1px solid #d9d9d9;display:flex;justify-content:center;align-items:flex-start;overflow:hidden;padding:0 0px;padding-top:2.5px;"><span style="white-space:nowrap;line-height:10.5px;text-align:center;font-size:8.4px;font-weight:bold;letter-spacing:0.5px;color:#1a1a1a">Admit Decision<br>to Discharge</span></div>
<div class="a" style="left:792.0px;top:538.0px;width:78.0px;height:17.0px;background:#fff;border:1px solid #d9d9d9;display:flex;justify-content:center;align-items:center;overflow:hidden;padding:0 0px;padding-top:1.5px;"><span style="white-space:nowrap;line-height:10.5px;text-align:center;font-size:8.3px;color:#222">«Expr»</span></div>
<div class="a" style="left:326.0px;top:565.4px;width:155.5px;height:16.6px;background:#fff;border:1px dotted #ababab;overflow:hidden;padding:3px 0 0 2px"><span style="white-space:nowrap;line-height:10px;font-size:8.4px;font-weight:bold;letter-spacing:0.42px;color:#1a1a1a">ED Process Timing (Median)</span></div>
<div class="a" style="left:326.0px;top:581.0px;width:78.0px;height:31.0px;background:#dae9f2;border:1px solid #d9d9d9;display:flex;justify-content:center;align-items:flex-start;overflow:hidden;padding:0 0px;padding-top:4px;"><span style="white-space:nowrap;line-height:10.5px;text-align:center;font-size:8.4px;font-weight:bold;letter-spacing:0.5px;color:#1a1a1a">Door to Triage</span></div>
<div class="a" style="left:326.0px;top:611.0px;width:78.0px;height:16.0px;background:#fff;border:1px solid #d9d9d9;display:flex;justify-content:center;align-items:center;overflow:hidden;padding:0 0px;padding-top:1.5px;"><span style="white-space:nowrap;line-height:10.5px;text-align:center;font-size:8.3px;color:#222">«Expr»</span></div>
<div class="a" style="left:403.0px;top:581.0px;width:78.0px;height:31.0px;background:#e5ebd9;border:1px solid #d9d9d9;display:flex;justify-content:center;align-items:flex-start;overflow:hidden;padding:0 0px;padding-top:4px;"><span style="white-space:nowrap;line-height:10.5px;text-align:center;font-size:8.4px;font-weight:bold;letter-spacing:0.5px;color:#1a1a1a">Door to Room</span></div>
<div class="a" style="left:403.0px;top:611.0px;width:78.0px;height:16.0px;background:#fff;border:1px solid #d9d9d9;display:flex;justify-content:center;align-items:center;overflow:hidden;padding:0 0px;padding-top:1.5px;"><span style="white-space:nowrap;line-height:10.5px;text-align:center;font-size:8.3px;color:#222">«Expr»</span></div>
<div class="a" style="left:480.0px;top:581.0px;width:78.0px;height:31.0px;background:#dae9f2;border:1px solid #d9d9d9;display:flex;justify-content:center;align-items:flex-start;overflow:hidden;padding:0 0px;padding-top:4px;"><span style="white-space:nowrap;line-height:10.5px;text-align:center;font-size:8.4px;font-weight:bold;letter-spacing:0.5px;color:#1a1a1a">Door to MSE</span></div>
<div class="a" style="left:480.0px;top:611.0px;width:78.0px;height:16.0px;background:#fff;border:1px solid #d9d9d9;display:flex;justify-content:center;align-items:center;overflow:hidden;padding:0 0px;padding-top:1.5px;"><span style="white-space:nowrap;line-height:10.5px;text-align:center;font-size:8.3px;color:#222">«Expr»</span></div>
<div class="a" style="left:557.0px;top:581.0px;width:77.0px;height:31.0px;background:#e5ebd9;border:1px solid #d9d9d9;display:flex;justify-content:center;align-items:flex-start;overflow:hidden;padding:0 0px;padding-top:4px;"><span style="white-space:nowrap;line-height:10.5px;text-align:center;font-size:8.4px;font-weight:bold;letter-spacing:0.5px;color:#1a1a1a">Door to<br>Discharge</span></div>
<div class="a" style="left:557.0px;top:611.0px;width:77.0px;height:16.0px;background:#fff;border:1px solid #d9d9d9;display:flex;justify-content:center;align-items:center;overflow:hidden;padding:0 0px;padding-top:1.5px;"><span style="white-space:nowrap;line-height:10.5px;text-align:center;font-size:8.3px;color:#222">«Expr»</span></div>
<div class="a" style="left:638.8px;top:565.3px;width:159.8px;height:15.7px;background:#fff;border:1px dotted #ababab;overflow:hidden;padding:3px 0 0 2px"><span style="white-space:nowrap;line-height:10px;font-size:8.4px;font-weight:bold;letter-spacing:0.42px;color:#1a1a1a">Decision to Admit Timing (Median)</span></div>
<div class="a" style="left:639.0px;top:580.0px;width:77.0px;height:32.0px;background:#dae9f2;border:1px solid #d9d9d9;display:flex;justify-content:center;align-items:flex-start;overflow:hidden;padding:0 0px;padding-top:3px;"><span style="white-space:nowrap;line-height:10.5px;text-align:center;font-size:8.4px;font-weight:bold;letter-spacing:0.5px;color:#1a1a1a">Door to Admit<br>Decision</span></div>
<div class="a" style="left:639.0px;top:611.0px;width:77.0px;height:16.0px;background:#fff;border:1px solid #d9d9d9;display:flex;justify-content:center;align-items:center;overflow:hidden;padding:0 0px;padding-top:1.5px;"><span style="white-space:nowrap;line-height:10.5px;text-align:center;font-size:8.3px;color:#222">«Expr»</span></div>
<div class="a" style="left:715.0px;top:580.0px;width:78.0px;height:32.0px;background:#e5ebd9;border:1px solid #d9d9d9;display:flex;justify-content:center;align-items:flex-start;overflow:hidden;padding:0 0px;padding-top:3px;"><span style="white-space:nowrap;line-height:10.5px;text-align:center;font-size:8.4px;font-weight:bold;letter-spacing:0.5px;color:#1a1a1a">MSE to Admit<br>Dec</span></div>
<div class="a" style="left:715.0px;top:611.0px;width:78.0px;height:16.0px;background:#fff;border:1px solid #d9d9d9;display:flex;justify-content:center;align-items:center;overflow:hidden;padding:0 0px;padding-top:1.5px;"><span style="white-space:nowrap;line-height:10.5px;text-align:center;font-size:8.3px;color:#222">«Expr»</span></div>
<div class="a" style="left:792.0px;top:580.0px;width:78.0px;height:32.0px;background:#dae9f2;border:1px solid #d9d9d9;display:flex;justify-content:center;align-items:flex-start;overflow:hidden;padding:0 0px;padding-top:3px;"><span style="white-space:nowrap;line-height:10.5px;text-align:center;font-size:8.4px;font-weight:bold;letter-spacing:0.5px;color:#1a1a1a">Admit Decision<br>to Discharge</span></div>
<div class="a" style="left:792.0px;top:611.0px;width:78.0px;height:16.0px;background:#fff;border:1px solid #d9d9d9;display:flex;justify-content:center;align-items:center;overflow:hidden;padding:0 0px;padding-top:1.5px;"><span style="white-space:nowrap;line-height:10.5px;text-align:center;font-size:8.3px;color:#222">«Expr»</span></div>
<div class="a" style="left:326.0px;top:644.0px;width:78.0px;height:17.0px;background:#dae9f2;border:1px solid #d9d9d9;display:flex;justify-content:flex-start;align-items:center;overflow:hidden;padding:0 2px;padding-top:1.5px;"><span style="white-space:nowrap;line-height:10.5px;text-align:center;font-size:8.4px;font-weight:bold;letter-spacing:0.3px;color:#1a1a1a">ESI Acuity</span></div>
<div class="a" style="left:403.0px;top:644.0px;width:78.0px;height:17.0px;background:#dae9f2;border:1px solid #d9d9d9;display:flex;justify-content:center;align-items:center;overflow:hidden;padding:0 0px;padding-top:1.5px;"><span style="white-space:nowrap;line-height:10.5px;text-align:center;font-size:8.4px;font-weight:bold;letter-spacing:0.5px;color:#1a1a1a">Visits</span></div>
<div class="a" style="left:326.0px;top:660.0px;width:78.0px;height:16.0px;background:#fff;border:1px solid #d9d9d9;display:flex;justify-content:flex-end;align-items:center;overflow:hidden;padding:0 2px;padding-top:1.5px;"><span style="white-space:nowrap;line-height:10.5px;text-align:center;font-size:8.3px;color:#222">[ESI_ACUITY_NAME]</span></div>
<div class="a" style="left:403.0px;top:660.0px;width:78.0px;height:16.0px;background:#fff;border:1px solid #d9d9d9;display:flex;justify-content:center;align-items:center;overflow:hidden;padding:0 0px;padding-top:1.5px;"><span style="white-space:nowrap;line-height:10.5px;text-align:center;font-size:8.3px;color:#3030b8;text-decoration:underline">ountDistinct(VISIT_II</span></div>
<div class="a" style="left:326.0px;top:675.0px;width:78.0px;height:16.0px;background:#e5ebd9;border:1px solid #d9d9d9;display:flex;justify-content:flex-end;align-items:center;overflow:hidden;padding:0 2px;padding-top:1.5px;"><span style="white-space:nowrap;line-height:10.5px;text-align:center;font-size:8.4px;font-weight:bold;letter-spacing:0.3px;color:#1a1a1a">Average</span></div>
<div class="a" style="left:403.0px;top:675.0px;width:78.0px;height:16.0px;background:#fff;border:1px solid #d9d9d9;display:flex;justify-content:center;align-items:center;overflow:hidden;padding:0 0px;padding-top:1.5px;"><span style="white-space:nowrap;line-height:10.5px;text-align:center;font-size:8.3px;color:#222">[Avg(ACUITY)]</span></div>
<div class="a" style="left:485.0px;top:644.0px;width:78.0px;height:17.0px;background:#dae9f2;border:1px solid #d9d9d9;display:flex;justify-content:flex-start;align-items:center;overflow:hidden;padding:0 2px;padding-top:1.5px;"><span style="white-space:nowrap;line-height:10.5px;text-align:center;font-size:8.4px;font-weight:bold;letter-spacing:0.3px;color:#1a1a1a">Billing Acuity</span></div>
<div class="a" style="left:562.0px;top:644.0px;width:78.0px;height:17.0px;background:#dae9f2;border:1px solid #d9d9d9;display:flex;justify-content:center;align-items:center;overflow:hidden;padding:0 0px;padding-top:1.5px;"><span style="white-space:nowrap;line-height:10.5px;text-align:center;font-size:8.4px;font-weight:bold;letter-spacing:0.5px;color:#1a1a1a">Visits</span></div>
<div class="a" style="left:485.0px;top:660.0px;width:78.0px;height:16.0px;background:#fff;border:1px solid #d9d9d9;display:flex;justify-content:flex-end;align-items:center;overflow:hidden;padding:0 2px;padding-top:1.5px;"><span style="white-space:nowrap;line-height:10.5px;text-align:center;font-size:8.3px;color:#222">«Expr»</span></div>
<div class="a" style="left:562.0px;top:660.0px;width:78.0px;height:16.0px;background:#fff;border:1px solid #d9d9d9;display:flex;justify-content:center;align-items:center;overflow:hidden;padding:0 0px;padding-top:1.5px;"><span style="white-space:nowrap;line-height:10.5px;text-align:center;font-size:8.3px;color:#3030b8;text-decoration:underline">ountDistinct(VISIT_II</span></div>
<div class="a" style="left:485.0px;top:675.0px;width:78.0px;height:16.0px;background:#e5ebd9;border:1px solid #d9d9d9;display:flex;justify-content:flex-end;align-items:center;overflow:hidden;padding:0 2px;padding-top:1.5px;"><span style="white-space:nowrap;line-height:10.5px;text-align:center;font-size:8.4px;font-weight:bold;letter-spacing:0.3px;color:#1a1a1a">Average</span></div>
<div class="a" style="left:562.0px;top:675.0px;width:78.0px;height:16.0px;background:#fff;border:1px solid #d9d9d9;display:flex;justify-content:center;align-items:center;overflow:hidden;padding:0 0px;padding-top:1.5px;"><span style="white-space:nowrap;line-height:10.5px;text-align:center;font-size:8.3px;color:#222">BILLING_ACUITY_LI</span></div>
<div class="a" style="left:633.5px;top:580.5px;width:4px;height:46px;border-left:1px solid #e4e4e4;border-right:1px solid #e4e4e4"></div>
<div class="a" style="left:634px;top:592.5px;width:3px;height:4px;border:1px solid #b8b8b8;border-left:0"></div>
<div class="a" style="left:634px;top:604px;width:3px;height:4px;border:1px solid #b8b8b8;border-left:0"></div>
<div class="a" style="left:634px;top:620px;width:3px;height:4px;border:1px solid #b8b8b8;border-left:0"></div>
<div class="a" style="left:634px;top:581px;width:3px;height:4px;border-top:1px solid #c0c0c0;border-left:1px solid #c0c0c0"></div>
<div class="a" style="left:634px;top:613px;width:3px;height:3px;border-bottom:1px solid #c0c0c0;border-right:1px solid #c0c0c0"></div>
<div class="a" style="left:1212px;top:79px;width:324px;height:736px;background:#f2f4f9"></div>
<div class="a" style="left:1215px;top:80px;width:321px;height:394px;background:#e9ecf2;border-left:1px solid #b4bac4"></div>
<div class="phdr2" style="left:1215px;top:80px;width:321px;height:18px"></div>
<div class="ptitle" style="left:1219.5px;top:84.5px;color:#4f5866">Solution Explorer</div>
<div class="tri" style="left:1486px;top:88px;border-width:5px 4.5px 0;border-top-color:#222"></div>
<svg style="left:1502px;top:82px" width="9" height="13" viewBox="0 0 9 13"><path d="M2.5 1h4v6h-4z" fill="none" stroke="#333" stroke-width="1.2"/><path d="M0.5 7.5h8M4.5 8v5" stroke="#333" stroke-width="1.2"/></svg>
<svg style="left:1520px;top:84px" width="10" height="10" viewBox="0 0 10 10"><path d="M1 1L9 9M9 1L1 9" stroke="#222" stroke-width="1.7"/></svg>
<div class="ptb" style="left:1216px;top:98px;width:320px;height:21px;background:linear-gradient(#f5f7fb,#e3e7ef 60%,#d5dae4)"></div>
<svg style="left:1221px;top:101px" width="14" height="15" viewBox="0 0 14 15"><rect x="0.5" y="0.5" width="9" height="8" fill="#e8dcb0" stroke="#a09060" stroke-width=".8"/><rect x="3.5" y="4.5" width="9" height="8" fill="#d8d0b0" stroke="#908060" stroke-width=".8"/><rect x="5" y="11" width="8" height="3" fill="#7080b0"/></svg>
<div class="a" style="left:1239px;top:102px;width:1px;height:14px;background:#c0c5ce"></div>
<svg style="left:1245px;top:101px" width="13" height="15" viewBox="0 0 13 15"><rect x="0.5" y="0.5" width="8" height="11" fill="#f4f4f4" stroke="#909090" stroke-width=".8"/><path d="M5 4l6 6-3 2-5-5z" fill="#e8d070" stroke="#806020" stroke-width=".7"/><rect x="2" y="10" width="6" height="4" fill="#8090c0"/></svg>
<div class="a" style="left:1216px;top:119px;width:306px;height:341px;background:#fff"></div>
<div class="a" style="left:1522px;top:119px;width:14px;height:341px;background:#f0f0f0"></div>
<div class="a" style="left:1524px;top:133px;width:10px;height:66px;background:#cdcdcd"></div>
<svg style="left:1525px;top:124px" width="8" height="5" viewBox="0 0 8 5"><path d="M0.5 4.5L4 1l3.5 3.5" fill="none" stroke="#555" stroke-width="1.1"/></svg>
<svg style="left:1525px;top:451px" width="8" height="5" viewBox="0 0 8 5"><path d="M0.5 0.5L4 4l3.5-3.5" fill="none" stroke="#555" stroke-width="1.1"/></svg>
<div class="a" style="left:1216px;top:460px;width:320px;height:14px;background:#f0f0f0"></div>
<div class="a" style="left:1229px;top:462px;width:244px;height:10px;background:#cdcdcd"></div>
<svg style="left:1221px;top:463px" width="5" height="8" viewBox="0 0 5 8"><path d="M4.5 0.5L1 4l3.5 3.5" fill="none" stroke="#555" stroke-width="1.1"/></svg>
<svg style="left:1513px;top:463px" width="5" height="8" viewBox="0 0 5 8"><path d="M0.5 0.5L4 4L0.5 7.5" fill="none" stroke="#555" stroke-width="1.1"/></svg>
<svg style="left:1224px;top:120.5px" width="13" height="14" viewBox="0 0 13 14"><rect x="0.5" y="0.5" width="9" height="10" fill="#eef2f6" stroke="#808890" stroke-width=".8"/><path d="M2 3h5M2 5h5M2 7h5" stroke="#90a0b0"/><rect x="3" y="7" width="6" height="6" fill="#d8dde6" stroke="#666" stroke-width=".7"/><path d="M9 9l3 3v-3z" fill="#3a9a40"/></svg>
<div class="t" style="left:1240.8px;top:123.0px;font-size:9.4px;font-weight:bold;color:#111">RDL</div>
<div class="a" style="left:1225.5px;top:135px;width:1px;height:50px;border-left:1px dotted #b0b0b0"></div>
<div class="a" style="left:1240.5px;top:148px;width:1px;height:8px;border-left:1px dotted #b0b0b0"></div>
<div class="a" style="left:1240.5px;top:191px;width:1px;height:269px;border-left:1px dotted #b0b0b0"></div>
<svg style="left:1222px;top:137px" width="9" height="9" viewBox="0 0 9 9"><rect x="0.5" y="0.5" width="8" height="8" fill="#f6f6f8" stroke="#b0b4c0"/><path d="M2 4.5h5" stroke="#3a3a3a" stroke-width="1.1"/></svg>
<svg style="left:1238.6px;top:136.4px" width="13" height="10" viewBox="0 0 13 10"><defs><linearGradient id="fo" x1="0" y1="0" x2="0" y2="1"><stop offset="0" stop-color="#fbeaa8"/><stop offset="1" stop-color="#dcae40"/></linearGradient></defs><path d="M0.5 0.5h4l1 1.5h5v7.5H0.5z" fill="#d8b050" stroke="#a88a40" stroke-width=".8"/><path d="M2.5 3.5h10l-2 6H0.5z" fill="url(#fo)" stroke="#9a7a30" stroke-width=".8"/></svg>
<div class="t" style="left:1256.2px;top:137.4px;font-size:9.1px;color:#141414">Shared Data Sources</div>
<div class="a" style="left:1226px;top:170.2px;width:11px;height:1px;border-top:1px dotted #a0a0a0"></div>
<svg style="left:1238.6px;top:165.2px" width="13" height="10" viewBox="0 0 13 10"><defs><linearGradient id="fc" x1="0" y1="0" x2="0" y2="1"><stop offset="0" stop-color="#f8e7a0"/><stop offset=".6" stop-color="#efc850"/><stop offset="1" stop-color="#c89830"/></linearGradient></defs><path d="M0.5 0.5h4l1 1.5h7v2H0.5z" fill="#e0cfa0" stroke="#b0a070" stroke-width=".8"/><rect x="0.5" y="2.5" width="12" height="7" fill="url(#fc)" stroke="#8a6a20" stroke-width=".8"/></svg>
<div class="t" style="left:1256.2px;top:166.2px;font-size:9.1px;color:#141414">Shared Datasets</div>
<svg style="left:1222px;top:181px" width="9" height="9" viewBox="0 0 9 9"><rect x="0.5" y="0.5" width="8" height="8" fill="#f6f6f8" stroke="#b0b4c0"/><path d="M2 4.5h5" stroke="#3a3a3a" stroke-width="1.1"/></svg>
<svg style="left:1238.6px;top:179.6px" width="13" height="10" viewBox="0 0 13 10"><defs><linearGradient id="fo" x1="0" y1="0" x2="0" y2="1"><stop offset="0" stop-color="#fbeaa8"/><stop offset="1" stop-color="#dcae40"/></linearGradient></defs><path d="M0.5 0.5h4l1 1.5h5v7.5H0.5z" fill="#d8b050" stroke="#a88a40" stroke-width=".8"/><path d="M2.5 3.5h10l-2 6H0.5z" fill="url(#fo)" stroke="#9a7a30" stroke-width=".8"/></svg>
<div class="t" style="left:1256.2px;top:180.6px;font-size:9.1px;color:#141414">Reports</div>
<div class="a" style="left:1241px;top:155.8px;width:11px;height:1px;border-top:1px dotted #a0a0a0"></div>
<div class="a" style="left:1270px;top:149.8px;width:29.5px;height:12.5px;background:#ececec"></div>
<svg style="left:1254.5px;top:149.3px" width="13" height="14" viewBox="0 0 13 14"><ellipse cx="6" cy="2.5" rx="3.5" ry="1.8" fill="#f0d060"/><rect x="2.5" y="2.5" width="7" height="7" fill="#e8b830"/><ellipse cx="6" cy="9.5" rx="3.5" ry="1.8" fill="#c89820"/><path d="M1 12.5h10" stroke="#6070b0" stroke-width="1.5"/></svg>
<div class="t" style="left:1271.6px;top:151.8px;font-size:9.4px;color:#141414">DR.rds</div>
<div class="a" style="left:1216px;top:119px;width:306px;height:341px;overflow:hidden">
<div class="a" style="left:25px;top:80.0px;width:11px;height:1px;border-top:1px dotted #a0a0a0"></div>
<svg style="left:40px;top:73.5px" width="11" height="12" viewBox="0 0 11 12"><rect x="0.5" y="0.5" width="10" height="11" fill="#fafafa" stroke="#6a6a6a"/><path d="M2 2.5h6M2 4.5h3" stroke="#b8b8b8"/><path d="M3 10V8.5M5.2 10V7M7.4 10V5.5" stroke="#333" stroke-width="1.3"/><path d="M5 5.5l3-2" stroke="#aaa" stroke-width=".8"/></svg>
<div class="t" style="left:55.4px;top:76.0px;font-size:9.15px;color:#141414;letter-spacing:-0.06px">ABS_PAT_zcus_iatric_case_mix_index_by_phys_and_drg.rdl</div>
<div class="a" style="left:25px;top:94.4px;width:11px;height:1px;border-top:1px dotted #a0a0a0"></div>
<svg style="left:40px;top:87.9px" width="11" height="12" viewBox="0 0 11 12"><rect x="0.5" y="0.5" width="10" height="11" fill="#fafafa" stroke="#6a6a6a"/><path d="M2 2.5h6M2 4.5h3" stroke="#b8b8b8"/><path d="M3 10V8.5M5.2 10V7M7.4 10V5.5" stroke="#333" stroke-width="1.3"/><path d="M5 5.5l3-2" stroke="#aaa" stroke-width=".8"/></svg>
<div class="t" style="left:55.4px;top:90.4px;font-size:9.15px;color:#141414;letter-spacing:-0.06px">ABS_PAT_zcus_iatric_hac.rdl</div>
<div class="a" style="left:25px;top:108.8px;width:11px;height:1px;border-top:1px dotted #a0a0a0"></div>
<svg style="left:40px;top:102.3px" width="11" height="12" viewBox="0 0 11 12"><rect x="0.5" y="0.5" width="10" height="11" fill="#fafafa" stroke="#6a6a6a"/><path d="M2 2.5h6M2 4.5h3" stroke="#b8b8b8"/><path d="M3 10V8.5M5.2 10V7M7.4 10V5.5" stroke="#333" stroke-width="1.3"/><path d="M5 5.5l3-2" stroke="#aaa" stroke-width=".8"/></svg>
<div class="t" style="left:55.4px;top:104.8px;font-size:9.15px;color:#141414;letter-spacing:-0.06px">ABS_zcus_iatric_consulting_phys_for_crimson_v2.rdl</div>
<div class="a" style="left:25px;top:123.2px;width:11px;height:1px;border-top:1px dotted #a0a0a0"></div>
<svg style="left:40px;top:116.7px" width="11" height="12" viewBox="0 0 11 12"><rect x="0.5" y="0.5" width="10" height="11" fill="#fafafa" stroke="#6a6a6a"/><path d="M2 2.5h6M2 4.5h3" stroke="#b8b8b8"/><path d="M3 10V8.5M5.2 10V7M7.4 10V5.5" stroke="#333" stroke-width="1.3"/><path d="M5 5.5l3-2" stroke="#aaa" stroke-width=".8"/></svg>
<div class="t" style="left:55.4px;top:119.2px;font-size:9.15px;color:#141414;letter-spacing:-0.06px">ADM_PAT_zcus_adm_productivity_rpt_dld.rdl</div>
<div class="a" style="left:25px;top:137.6px;width:11px;height:1px;border-top:1px dotted #a0a0a0"></div>
<svg style="left:40px;top:131.1px" width="11" height="12" viewBox="0 0 11 12"><rect x="0.5" y="0.5" width="10" height="11" fill="#fafafa" stroke="#6a6a6a"/><path d="M2 2.5h6M2 4.5h3" stroke="#b8b8b8"/><path d="M3 10V8.5M5.2 10V7M7.4 10V5.5" stroke="#333" stroke-width="1.3"/><path d="M5 5.5l3-2" stroke="#aaa" stroke-width=".8"/></svg>
<div class="t" style="left:55.4px;top:133.6px;font-size:9.15px;color:#141414;letter-spacing:-0.06px">ADM_PAT_zcus_iatric_alpha_census_list_inpts_obsv.rdl</div>
<div class="a" style="left:25px;top:152.0px;width:11px;height:1px;border-top:1px dotted #a0a0a0"></div>
<svg style="left:40px;top:145.5px" width="11" height="12" viewBox="0 0 11 12"><rect x="0.5" y="0.5" width="10" height="11" fill="#fafafa" stroke="#6a6a6a"/><path d="M2 2.5h6M2 4.5h3" stroke="#b8b8b8"/><path d="M3 10V8.5M5.2 10V7M7.4 10V5.5" stroke="#333" stroke-width="1.3"/><path d="M5 5.5l3-2" stroke="#aaa" stroke-width=".8"/></svg>
<div class="t" style="left:55.4px;top:148.0px;font-size:9.15px;color:#141414;letter-spacing:-0.06px">ADM_PAT_zcus_iatric_alpha_census_list_no_confidential.rdl</div>
<div class="a" style="left:25px;top:166.4px;width:11px;height:1px;border-top:1px dotted #a0a0a0"></div>
<svg style="left:40px;top:159.9px" width="11" height="12" viewBox="0 0 11 12"><rect x="0.5" y="0.5" width="10" height="11" fill="#fafafa" stroke="#6a6a6a"/><path d="M2 2.5h6M2 4.5h3" stroke="#b8b8b8"/><path d="M3 10V8.5M5.2 10V7M7.4 10V5.5" stroke="#333" stroke-width="1.3"/><path d="M5 5.5l3-2" stroke="#aaa" stroke-width=".8"/></svg>
<div class="t" style="left:55.4px;top:162.4px;font-size:9.15px;color:#141414;letter-spacing:-0.06px">ADM_PAT_zcus_iatric_alpha_census_list_with_dx.rdl</div>
<div class="a" style="left:25px;top:180.8px;width:11px;height:1px;border-top:1px dotted #a0a0a0"></div>
<svg style="left:40px;top:174.3px" width="11" height="12" viewBox="0 0 11 12"><rect x="0.5" y="0.5" width="10" height="11" fill="#fafafa" stroke="#6a6a6a"/><path d="M2 2.5h6M2 4.5h3" stroke="#b8b8b8"/><path d="M3 10V8.5M5.2 10V7M7.4 10V5.5" stroke="#333" stroke-width="1.3"/><path d="M5 5.5l3-2" stroke="#aaa" stroke-width=".8"/></svg>
<div class="t" style="left:55.4px;top:176.8px;font-size:9.15px;color:#141414;letter-spacing:-0.06px">ADM_PAT_zcus_iatric_alpha_census_list_with_dx_by_type.rdl</div>
<div class="a" style="left:25px;top:195.2px;width:11px;height:1px;border-top:1px dotted #a0a0a0"></div>
<svg style="left:40px;top:188.7px" width="11" height="12" viewBox="0 0 11 12"><rect x="0.5" y="0.5" width="10" height="11" fill="#fafafa" stroke="#6a6a6a"/><path d="M2 2.5h6M2 4.5h3" stroke="#b8b8b8"/><path d="M3 10V8.5M5.2 10V7M7.4 10V5.5" stroke="#333" stroke-width="1.3"/><path d="M5 5.5l3-2" stroke="#aaa" stroke-width=".8"/></svg>
<div class="t" style="left:55.4px;top:191.2px;font-size:9.15px;color:#141414;letter-spacing:-0.06px">ADM_PAT_zcus_iatric_current_bed_list_w_patients.rdl</div>
<div class="a" style="left:25px;top:209.6px;width:11px;height:1px;border-top:1px dotted #a0a0a0"></div>
<svg style="left:40px;top:203.1px" width="11" height="12" viewBox="0 0 11 12"><rect x="0.5" y="0.5" width="10" height="11" fill="#fafafa" stroke="#6a6a6a"/><path d="M2 2.5h6M2 4.5h3" stroke="#b8b8b8"/><path d="M3 10V8.5M5.2 10V7M7.4 10V5.5" stroke="#333" stroke-width="1.3"/><path d="M5 5.5l3-2" stroke="#aaa" stroke-width=".8"/></svg>
<div class="t" style="left:55.4px;top:205.6px;font-size:9.15px;color:#141414;letter-spacing:-0.06px">ADM_PAT_zcus_iatric_discharges_by_name_with_ins.rdl</div>
<div class="a" style="left:25px;top:224.0px;width:11px;height:1px;border-top:1px dotted #a0a0a0"></div>
<svg style="left:40px;top:217.5px" width="11" height="12" viewBox="0 0 11 12"><rect x="0.5" y="0.5" width="10" height="11" fill="#fafafa" stroke="#6a6a6a"/><path d="M2 2.5h6M2 4.5h3" stroke="#b8b8b8"/><path d="M3 10V8.5M5.2 10V7M7.4 10V5.5" stroke="#333" stroke-width="1.3"/><path d="M5 5.5l3-2" stroke="#aaa" stroke-width=".8"/></svg>
<div class="t" style="left:55.4px;top:220.0px;font-size:9.15px;color:#141414;letter-spacing:-0.06px">ADM_PAT_zcus_iatric_facility_stats_dashboard.rdl</div>
<div class="a" style="left:25px;top:238.4px;width:11px;height:1px;border-top:1px dotted #a0a0a0"></div>
<svg style="left:40px;top:231.9px" width="11" height="12" viewBox="0 0 11 12"><rect x="0.5" y="0.5" width="10" height="11" fill="#fafafa" stroke="#6a6a6a"/><path d="M2 2.5h6M2 4.5h3" stroke="#b8b8b8"/><path d="M3 10V8.5M5.2 10V7M7.4 10V5.5" stroke="#333" stroke-width="1.3"/><path d="M5 5.5l3-2" stroke="#aaa" stroke-width=".8"/></svg>
<div class="t" style="left:55.4px;top:234.4px;font-size:9.15px;color:#141414;letter-spacing:-0.06px">ADM_PAT_zcus_iatric_facility_stats_drilldown.rdl</div>
<div class="a" style="left:25px;top:252.8px;width:11px;height:1px;border-top:1px dotted #a0a0a0"></div>
<svg style="left:40px;top:246.3px" width="11" height="12" viewBox="0 0 11 12"><rect x="0.5" y="0.5" width="10" height="11" fill="#fafafa" stroke="#6a6a6a"/><path d="M2 2.5h6M2 4.5h3" stroke="#b8b8b8"/><path d="M3 10V8.5M5.2 10V7M7.4 10V5.5" stroke="#333" stroke-width="1.3"/><path d="M5 5.5l3-2" stroke="#aaa" stroke-width=".8"/></svg>
<div class="t" style="left:55.4px;top:248.8px;font-size:9.15px;color:#141414;letter-spacing:-0.06px">ADM_PAT_zcus_iatric_observation_time.rdl</div>
<div class="a" style="left:25px;top:267.2px;width:11px;height:1px;border-top:1px dotted #a0a0a0"></div>
<svg style="left:40px;top:260.7px" width="11" height="12" viewBox="0 0 11 12"><rect x="0.5" y="0.5" width="10" height="11" fill="#fafafa" stroke="#6a6a6a"/><path d="M2 2.5h6M2 4.5h3" stroke="#b8b8b8"/><path d="M3 10V8.5M5.2 10V7M7.4 10V5.5" stroke="#333" stroke-width="1.3"/><path d="M5 5.5l3-2" stroke="#aaa" stroke-width=".8"/></svg>
<div class="t" style="left:55.4px;top:263.2px;font-size:9.15px;color:#141414;letter-spacing:-0.06px">ADM_PAT_zcus_iatric_physician_consults.rdl</div>
<div class="a" style="left:25px;top:281.6px;width:11px;height:1px;border-top:1px dotted #a0a0a0"></div>
<svg style="left:40px;top:275.1px" width="11" height="12" viewBox="0 0 11 12"><rect x="0.5" y="0.5" width="10" height="11" fill="#fafafa" stroke="#6a6a6a"/><path d="M2 2.5h6M2 4.5h3" stroke="#b8b8b8"/><path d="M3 10V8.5M5.2 10V7M7.4 10V5.5" stroke="#333" stroke-width="1.3"/><path d="M5 5.5l3-2" stroke="#aaa" stroke-width=".8"/></svg>
<div class="t" style="left:55.4px;top:277.6px;font-size:9.15px;color:#141414;letter-spacing:-0.06px">ADM_PAT_zcus_iatric_physician_patient_association.rdl</div>
<div class="a" style="left:25px;top:296.0px;width:11px;height:1px;border-top:1px dotted #a0a0a0"></div>
<svg style="left:40px;top:289.5px" width="11" height="12" viewBox="0 0 11 12"><rect x="0.5" y="0.5" width="10" height="11" fill="#fafafa" stroke="#6a6a6a"/><path d="M2 2.5h6M2 4.5h3" stroke="#b8b8b8"/><path d="M3 10V8.5M5.2 10V7M7.4 10V5.5" stroke="#333" stroke-width="1.3"/><path d="M5 5.5l3-2" stroke="#aaa" stroke-width=".8"/></svg>
<div class="t" style="left:55.4px;top:292.0px;font-size:9.15px;color:#141414;letter-spacing:-0.06px">ADM_PAT_zcus_iatric_provider_activity_dashboard.rdl</div>
<div class="a" style="left:25px;top:310.4px;width:11px;height:1px;border-top:1px dotted #a0a0a0"></div>
<svg style="left:40px;top:303.9px" width="11" height="12" viewBox="0 0 11 12"><rect x="0.5" y="0.5" width="10" height="11" fill="#fafafa" stroke="#6a6a6a"/><path d="M2 2.5h6M2 4.5h3" stroke="#b8b8b8"/><path d="M3 10V8.5M5.2 10V7M7.4 10V5.5" stroke="#333" stroke-width="1.3"/><path d="M5 5.5l3-2" stroke="#aaa" stroke-width=".8"/></svg>
<div class="t" style="left:55.4px;top:306.4px;font-size:9.15px;color:#141414;letter-spacing:-0.06px">ADM_PAT_zcus_iatric_shift_assignments.rdl</div>
<div class="a" style="left:25px;top:324.8px;width:11px;height:1px;border-top:1px dotted #a0a0a0"></div>
<svg style="left:40px;top:318.3px" width="11" height="12" viewBox="0 0 11 12"><rect x="0.5" y="0.5" width="10" height="11" fill="#fafafa" stroke="#6a6a6a"/><path d="M2 2.5h6M2 4.5h3" stroke="#b8b8b8"/><path d="M3 10V8.5M5.2 10V7M7.4 10V5.5" stroke="#333" stroke-width="1.3"/><path d="M5 5.5l3-2" stroke="#aaa" stroke-width=".8"/></svg>
<div class="t" style="left:55.4px;top:320.8px;font-size:9.15px;color:#141414;letter-spacing:-0.06px">ADM_PAT_zcus_zotec_demographic_file_extract_sp.rdl</div>
<div class="a" style="left:25px;top:339.2px;width:11px;height:1px;border-top:1px dotted #a0a0a0"></div>
<svg style="left:40px;top:332.7px" width="11" height="12" viewBox="0 0 11 12"><rect x="0.5" y="0.5" width="10" height="11" fill="#fafafa" stroke="#6a6a6a"/><path d="M2 2.5h6M2 4.5h3" stroke="#b8b8b8"/><path d="M3 10V8.5M5.2 10V7M7.4 10V5.5" stroke="#333" stroke-width="1.3"/><path d="M5 5.5l3-2" stroke="#aaa" stroke-width=".8"/></svg>
<div class="t" style="left:55.4px;top:335.2px;font-size:9.15px;color:#141414;letter-spacing:-0.06px">ADM_zcus_iatric_adt_stats.rdl</div>
</div>
<div class="a" style="left:1215px;top:478px;width:321px;height:337px;background:#e9ecf2;border-left:1px solid #b4bac4"></div>
<div class="phdr2" style="left:1216px;top:478.5px;width:320px;height:19px"></div>
<div class="ptitle" style="left:1219.6px;top:483px;color:#4f5866">Properties</div>
<div class="tri" style="left:1486px;top:487px;border-width:5px 4.5px 0;border-top-color:#222"></div>
<svg style="left:1502px;top:481px" width="9" height="13" viewBox="0 0 9 13"><path d="M2.5 1h4v6h-4z" fill="none" stroke="#333" stroke-width="1.2"/><path d="M0.5 7.5h8M4.5 8v5" stroke="#333" stroke-width="1.2"/></svg>
<svg style="left:1520px;top:483px" width="10" height="10" viewBox="0 0 10 10"><path d="M1 1L9 9M9 1L1 9" stroke="#222" stroke-width="1.7"/></svg>
<div class="a" style="left:1216px;top:497.7px;width:320px;height:20.3px;background:#fff"></div>
<div class="t" style="left:1219.6px;top:502.8px;font-size:9.4px;font-weight:bold;color:#111">DR.rds</div>
<div class="a" style="left:1524px;top:499px;width:12px;height:18px;background:#f2f2f2"></div>
<div class="tri" style="left:1526px;top:507px;border-width:3px 2.5px 0;border-top-color:#222"></div>
<div class="ptb" style="left:1216px;top:518px;width:320px;height:21px;background:linear-gradient(#f5f7fb,#e3e7ef 60%,#d5dae4)"></div>
<div class="a" style="left:1217.4px;top:520px;width:18px;height:18px;background:#cfe3f5;border:1px solid #7fb0de"></div>
<svg style="left:1220px;top:523px" width="13" height="12" viewBox="0 0 13 12"><rect x="0.5" y="0.5" width="4" height="4" fill="#fff" stroke="#555" stroke-width=".8"/><rect x="0.5" y="6.5" width="4" height="4" fill="#fff" stroke="#555" stroke-width=".8"/><path d="M6 2h6M6 4h4M6 8h6M6 10h4" stroke="#6a7890"/></svg>
<div class="t" style="left:1239px;top:520px;font-size:8px;font-weight:bold;color:#3060c0;line-height:1">A</div>
<div class="t" style="left:1239px;top:528px;font-size:8px;font-weight:bold;color:#c03040;line-height:1">Z</div>
<svg style="left:1246px;top:521px" width="6" height="15" viewBox="0 0 6 15"><path d="M3 0v13M0.5 10l2.5 4 2.5-4" fill="none" stroke="#111" stroke-width="1.2"/></svg>
<div class="a" style="left:1256.5px;top:522px;width:1px;height:14px;background:#c0c5ce"></div>
<svg style="left:1262px;top:522px" width="13" height="13" viewBox="0 0 13 13"><rect x="0.5" y="0.5" width="12" height="11" fill="#e6e6e6" stroke="#bdbdbd"/><path d="M2 3h9" stroke="#c8c8c8"/></svg>
<div class="a" style="left:1216px;top:539px;width:320px;height:225px;background:#fff"></div>
<div class="a" style="left:1216px;top:539px;width:320px;height:16px;background:#e4e7f2"></div>
<div class="a" style="left:1216px;top:555px;width:11px;height:31px;background:#e4e7f2"></div>
<div class="a" style="left:1227px;top:555px;width:143px;height:15.7px;background:#e6e9f4"></div>
<div class="a" style="left:1370px;top:555px;width:1px;height:31px;background:#eef0f6"></div>
<svg style="left:1217.5px;top:543px" width="8" height="8" viewBox="0 0 8 8"><rect x="0.5" y="0.5" width="7" height="7" fill="#fff" stroke="#333"/><path d="M2 4h4" stroke="#111"/></svg>
<div class="t" style="left:1230.8px;top:542.3px;font-size:9.4px;color:#a8a8b0">Location</div>
<div class="t" style="left:1230.8px;top:558px;font-size:9.4px;color:#1a1a1a">File Name</div>
<div class="t" style="left:1372.5px;top:558px;font-size:9.4px;font-weight:bold;color:#111">DR.rds</div>
<div class="t" style="left:1230.8px;top:573.5px;font-size:9.4px;color:#909090">Full Path</div>
<div class="t" style="left:1374px;top:573.5px;font-size:9.4px;color:#909090">Y:\Projects\TNCAP-Reports\MT 6.15 U</div>
<div class="a" style="left:1216px;top:764px;width:320px;height:50px;background:#efefef;border:1px solid #a9a9a9;border-top-width:2px"></div>
<div class="t" style="left:1220.4px;top:770px;font-size:9.4px;font-weight:bold;color:#111">File Name</div>
<div class="t" style="left:1220.4px;top:784.5px;font-size:9.4px;color:#222">Specifies the name of the file.</div>
<div class="a" style="left:0;top:814px;width:1536px;height:18px;background:#eeeeee"></div>
<div class="t" style="left:7.4px;top:820px;font-size:9.0px;color:#222">Item(s) Saved</div>
</body></html>
